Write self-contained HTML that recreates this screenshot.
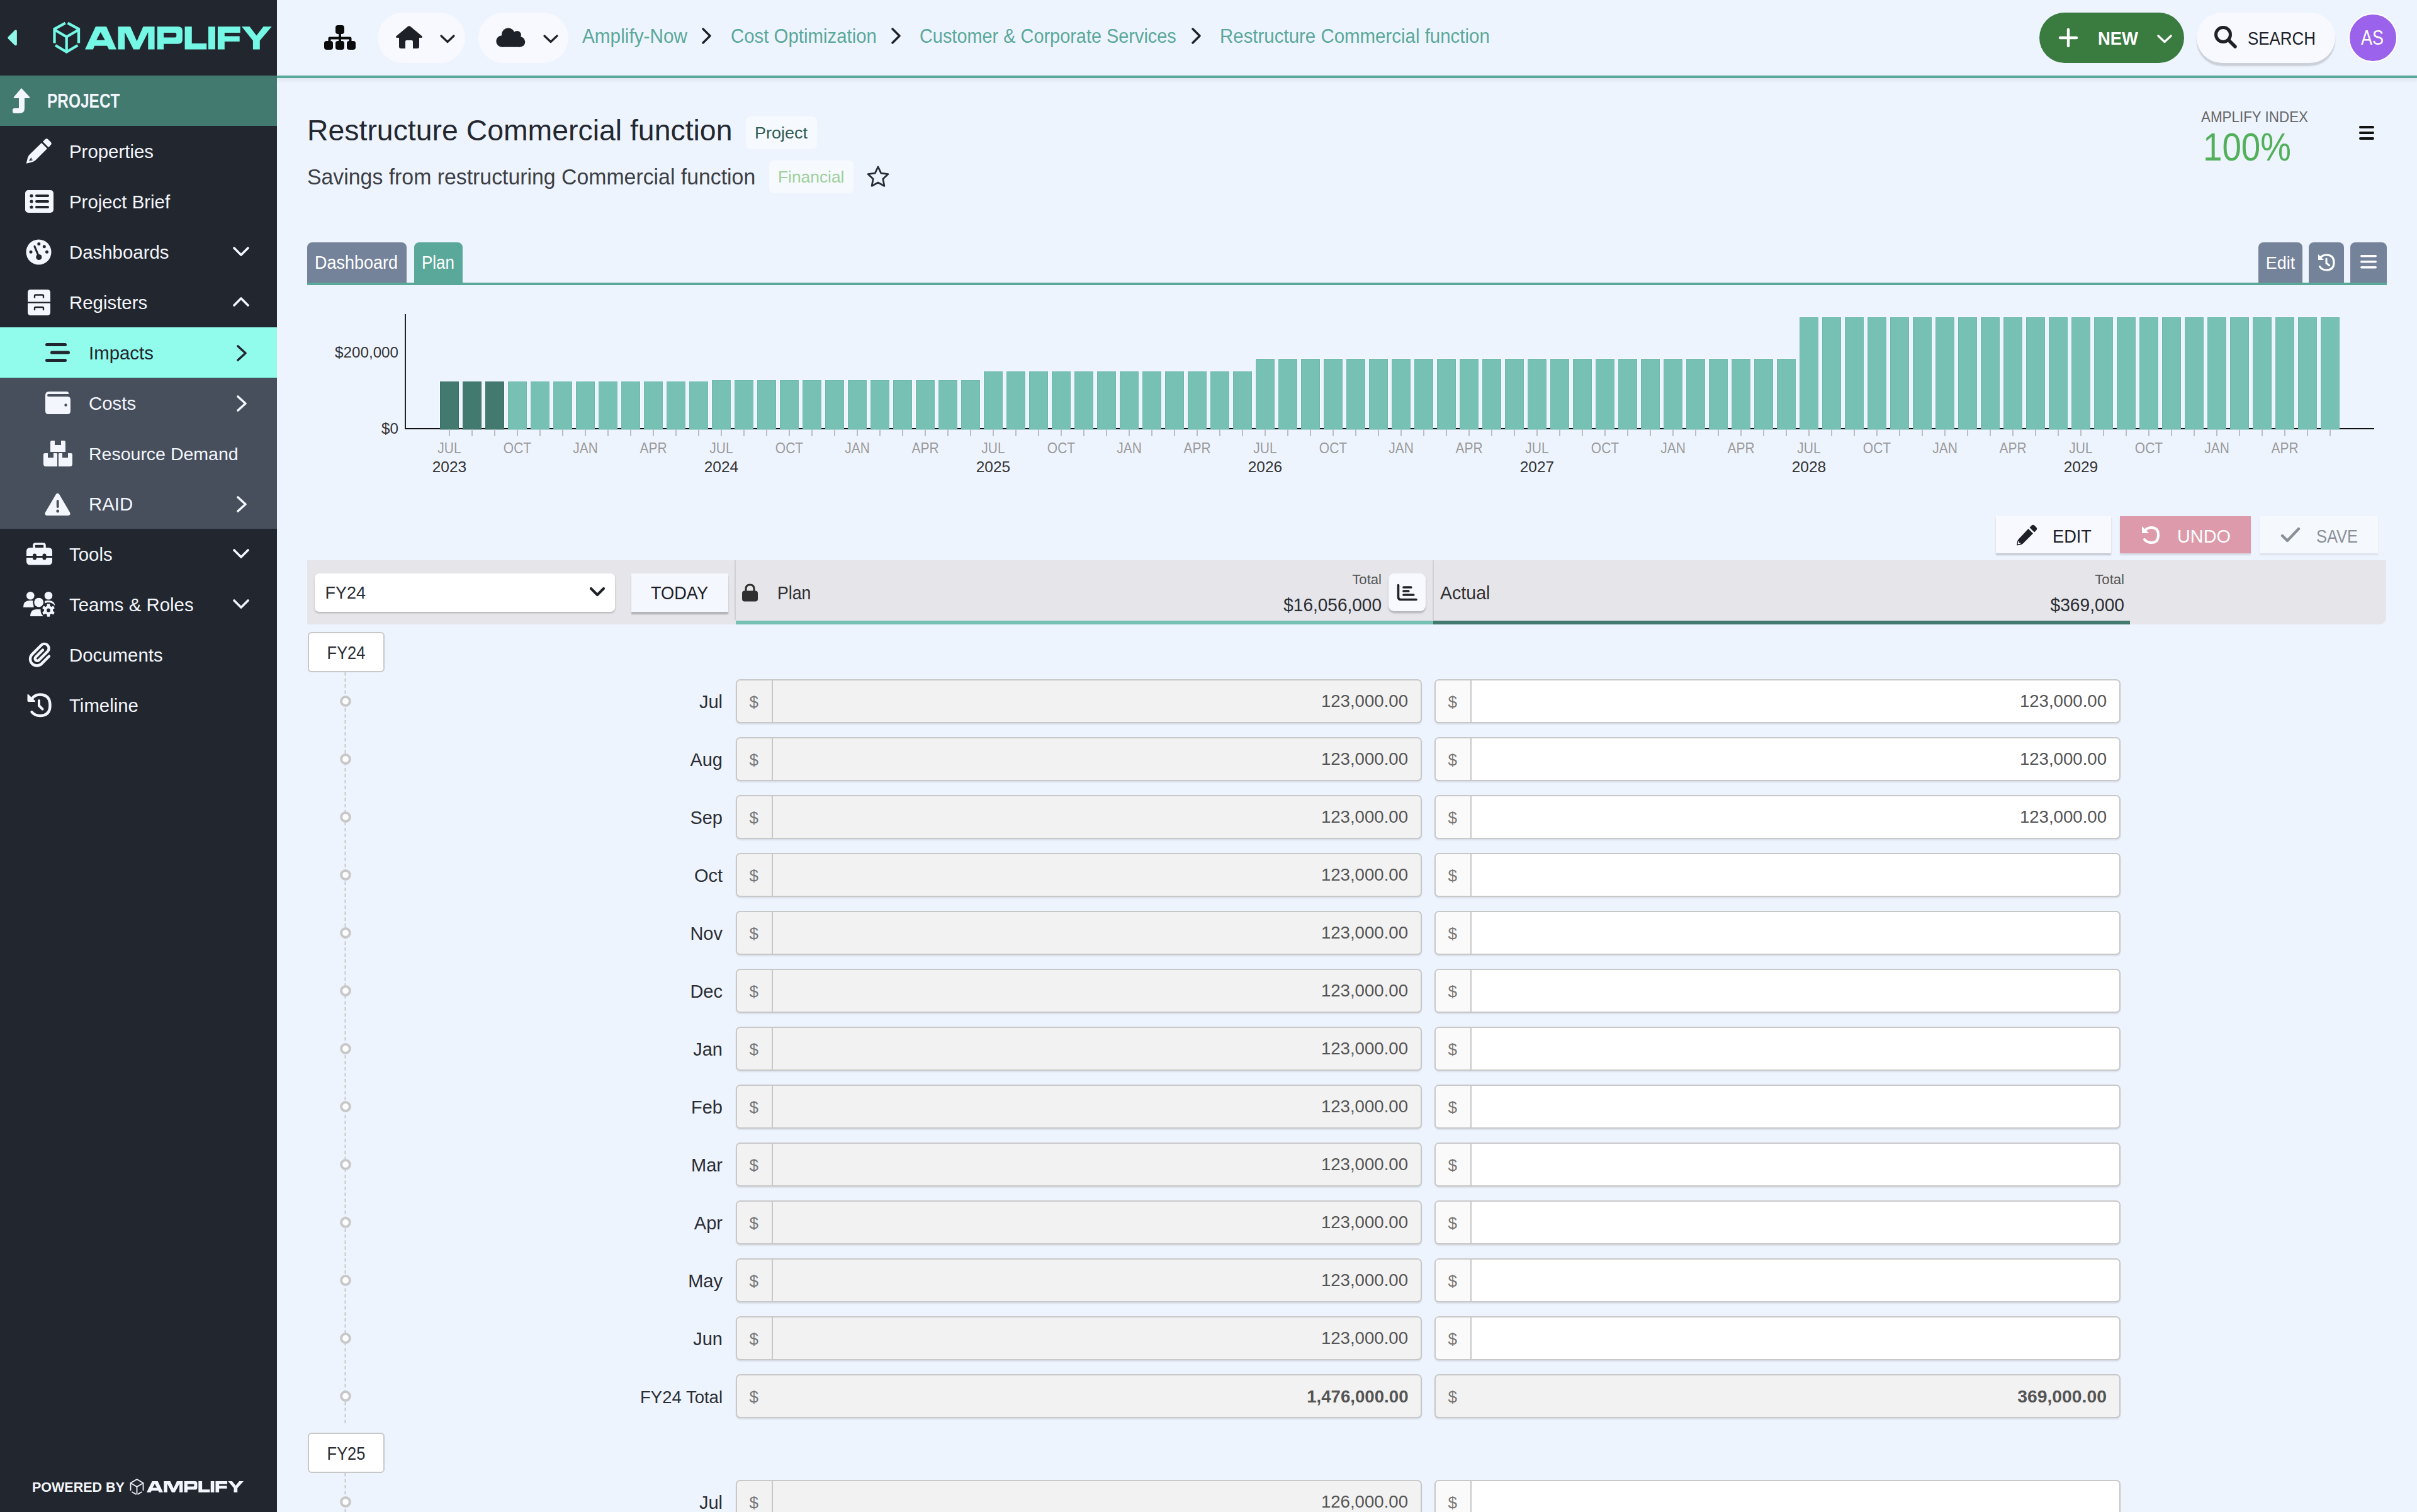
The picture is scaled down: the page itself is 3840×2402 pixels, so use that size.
<!DOCTYPE html>
<html><head><meta charset="utf-8"><title>Amplify</title>
<style>
html,body{margin:0;padding:0;}
body{width:3840px;height:2402px;overflow:hidden;position:relative;background:#eef4fe;font-family:"Liberation Sans",sans-serif;}
</style></head><body>
<div style="position:absolute;left:0px;top:0px;width:440px;height:2402px;background:#22262e;"></div>
<svg style="position:absolute;left:0px;top:0px;" width="140" height="90" viewBox="0 0 140 90"><path d="M23 48.5 Q26.9 46 26.9 50 L26.9 70 Q26.9 74 23 71.5 L13 61.5 Q11.5 60 13 58.5 Z" fill="#8ff8e8"/></svg>
<svg style="position:absolute;left:0px;top:0px;" width="140" height="90" viewBox="0 0 140 90"><g fill="none" stroke="#74f7e4" stroke-width="4.3" stroke-linecap="butt" stroke-linejoin="miter">
<path d="M86.5 68.5 L86.5 46 L103.8 36.6"/>
<path d="M107.6 36.6 L125 46 L125 68.5"/>
<path d="M87 47.5 L105.7 58.5 L124.5 47.5"/>
<path d="M105.7 58.5 L105.7 82"/>
<path d="M88 72 L105.7 82.5 L123.5 72"/>
</g></svg>
<svg style="position:absolute;left:134px;top:41px;" width="304" height="38" viewBox="0 0 304 38"><g fill="#74f7e4" fill-rule="evenodd">
<path d="M1 37.4 L17.9 1.3 L35.1 1.3 L51 37.4 L39 37.4 L36.1 31.75 L16.2 31.75 L13.9 37.4 Z M25.8 9.9 L19.2 22.8 L32.75 22.8 Z"/>
<path d="M53.6 37.4 L53.6 1.3 L73.2 1.3 L83.4 24.5 L93.4 1.3 L111.6 1.3 L111.6 37.4 L101.3 37.4 L101.3 9.9 L87.4 37.4 L78.1 37.4 L64.2 9.9 L64.2 37.4 Z"/>
<path d="M115.9 1.3 L149 1.3 Q155.9 1.3 155.9 8 L155.9 22 Q155.9 28.8 149 28.8 L126.1 28.8 L126.1 37.4 L115.9 37.4 Z M126.1 10.9 L144 10.9 Q146.3 10.9 146.3 13 L146.3 16.5 Q146.3 18.5 144 18.5 L126.1 18.5 Z"/>
<path d="M159.6 1.3 L170.8 1.3 L170.8 28.1 L194.3 28.1 L194.3 37.4 L159.6 37.4 Z"/>
<path d="M197 1.3 L207.9 1.3 L207.9 37.4 L197 37.4 Z"/>
<path d="M211.9 1.3 L247.7 1.3 L247.7 10.9 L222.8 10.9 L222.8 16.5 L246.7 16.5 L246.7 25.1 L222.8 25.1 L222.8 37.4 L211.9 37.4 Z"/>
<path d="M250 1.3 L262.6 1.3 L273.5 15.5 L284.4 1.3 L297.7 1.3 L278.8 23.5 L278.8 37.4 L267.9 37.4 L267.9 23.5 Z"/>
</g></svg>
<div style="position:absolute;left:0px;top:120px;width:440px;height:80px;background:#437a70;"></div>
<svg style="position:absolute;left:20px;top:139px;" width="29" height="42" viewBox="0 0 29 42"><path d="M14 1 L27 15 Q28 17 26 17 L19 17 L19 33 Q19 41 11 41 L3 41 Q0 41 0 38 L0 36 Q0 33 3 33 L9 33 Q10 33 10 32 L10 17 L3 17 Q1 17 2 15 Z" fill="#f3f6fc"/></svg>
<div style="position:absolute;top:145.6px;font-size:30.73px;line-height:30.73px;color:#f3f6fc;font-weight:700;white-space:nowrap;left:75.0px;transform:scaleX(0.7964);transform-origin:left center;">PROJECT</div>
<div style="position:absolute;top:225.9px;font-size:29.4px;line-height:29.4px;color:#f3f6fc;font-weight:400;white-space:nowrap;left:110.0px;">Properties</div>
<svg style="position:absolute;left:41px;top:219px;" width="42" height="42" viewBox="0 0 42 42"><path d="M30.5 2.5 Q33 0 35.5 2.5 L39.5 6.5 Q42 9 39.5 11.5 L36 15 L27 6 Z M25 8 L34 17 L16 35 Q13.5 37.5 10 38.5 L2 40.5 Q0.5 41 1 39.5 L3 31.5 Q4 28 6.5 26 Z" fill="#f3f6fc"/><path d="M9 32 L6.5 35.5 L10.5 35" fill="none" stroke="#22262e" stroke-width="1.6"/></svg>
<div style="position:absolute;top:305.9px;font-size:29.4px;line-height:29.4px;color:#f3f6fc;font-weight:400;white-space:nowrap;left:110.0px;">Project Brief</div>
<svg style="position:absolute;left:40px;top:302px;" width="45" height="36" viewBox="0 0 45 36"><rect x="0" y="0" width="45" height="36" rx="5" fill="#f3f6fc"/><g fill="#22262e"><circle cx="10" cy="9" r="2.6"/><circle cx="10" cy="18" r="2.6"/><circle cx="10" cy="27" r="2.6"/><rect x="16" y="7" width="22" height="4" rx="2"/><rect x="16" y="16" width="22" height="4" rx="2"/><rect x="16" y="25" width="22" height="4" rx="2"/></g></svg>
<div style="position:absolute;top:385.9px;font-size:29.4px;line-height:29.4px;color:#f3f6fc;font-weight:400;white-space:nowrap;left:110.0px;">Dashboards</div>
<svg style="position:absolute;left:41px;top:380px;" width="41" height="41" viewBox="0 0 41 41"><circle cx="20.5" cy="20.5" r="20" fill="#f3f6fc"/><g fill="#22262e"><circle cx="20.8" cy="7.5" r="2.5"/><circle cx="29.3" cy="11.7" r="2.5"/><circle cx="8" cy="20.2" r="2.5"/><circle cx="33.5" cy="20.2" r="2.5"/><circle cx="20.8" cy="28.5" r="4.6"/></g><path d="M14 11.5 L20.8 28" stroke="#22262e" stroke-width="3.2" stroke-linecap="round"/></svg>
<svg style="position:absolute;left:370px;top:392px;" width="26" height="16" viewBox="0 0 26 16"><path d="M2 2 L13 13 L24 2" fill="none" stroke="#f3f6fc" stroke-width="3.6" stroke-linecap="round" stroke-linejoin="round"/></svg>
<div style="position:absolute;top:465.9px;font-size:29.4px;line-height:29.4px;color:#f3f6fc;font-weight:400;white-space:nowrap;left:110.0px;">Registers</div>
<svg style="position:absolute;left:44px;top:460px;" width="36" height="41" viewBox="0 0 36 41"><path d="M5 0 L31 0 Q36 0 36 5 L36 19.5 L0 19.5 L0 5 Q0 0 5 0 Z M0 21.7 L36 21.7 L36 36 Q36 41 31 41 L5 41 Q0 41 0 36 Z" fill="#f3f6fc"/><g fill="none" stroke="#22262e" stroke-width="2.4" stroke-linecap="round"><path d="M11 12.5 L11 10 Q11 8.5 12.5 8.5 L23.5 8.5 Q25 8.5 25 10 L25 12.5"/><path d="M11 32 L11 29.5 Q11 28 12.5 28 L23.5 28 Q25 28 25 29.5 L25 32"/></g></svg>
<svg style="position:absolute;left:370px;top:471px;" width="26" height="16" viewBox="0 0 26 16"><path d="M2 14 L13 3 L24 14" fill="none" stroke="#f3f6fc" stroke-width="3.6" stroke-linecap="round" stroke-linejoin="round"/></svg>
<div style="position:absolute;left:0px;top:520px;width:440px;height:80px;background:#92fcec;"></div>
<div style="position:absolute;left:0px;top:600px;width:440px;height:240px;background:#474f5c;"></div>
<div style="position:absolute;top:545.9px;font-size:29.4px;line-height:29.4px;color:#22262e;font-weight:400;white-space:nowrap;left:141.0px;">Impacts</div>
<svg style="position:absolute;left:72px;top:544px;" width="40" height="32" viewBox="0 0 40 32"><g fill="#22262e"><rect x="0" y="1" width="34" height="5" rx="2.5"/><rect x="8" y="13.5" width="31" height="5" rx="2.5"/><rect x="0" y="26" width="34" height="5" rx="2.5"/></g></svg>
<svg style="position:absolute;left:375px;top:548px;" width="18" height="26" viewBox="0 0 18 26"><path d="M3 2 L15 13 L3 24" fill="none" stroke="#22262e" stroke-width="3.6" stroke-linecap="round" stroke-linejoin="round"/></svg>
<div style="position:absolute;top:625.9px;font-size:29.4px;line-height:29.4px;color:#f3f6fc;font-weight:400;white-space:nowrap;left:141.0px;">Costs</div>
<svg style="position:absolute;left:72px;top:622px;" width="40" height="36" viewBox="0 0 40 36"><path d="M6 0 L34 0 Q37 0 37 3 L37 4 L5 4 Q3 4 3 6 Q3 8 5 8 L35 8 Q40 8 40 13 L40 31 Q40 36 35 36 L5 36 Q0 36 0 31 L0 6 Q0 0 6 0 Z" fill="#f3f6fc"/><circle cx="32.5" cy="21.5" r="2.2" fill="#474f5c"/></svg>
<svg style="position:absolute;left:375px;top:628px;" width="18" height="26" viewBox="0 0 18 26"><path d="M3 2 L15 13 L3 24" fill="none" stroke="#f3f6fc" stroke-width="3.6" stroke-linecap="round" stroke-linejoin="round"/></svg>
<div style="position:absolute;top:706.7px;font-size:28.5px;line-height:28.5px;color:#f3f6fc;font-weight:400;white-space:nowrap;left:141.0px;">Resource Demand</div>
<svg style="position:absolute;left:69px;top:700px;" width="46" height="41" viewBox="0 0 46 41"><g fill="#f3f6fc"><path d="M13 0 L18 0 L18 7 L28 7 L28 0 L33 0 Q35 0 35 3 L35 18 L11 18 L11 3 Q11 0 13 0 Z"/><path d="M2 20 L7 20 L7 27 L16 27 L16 20 L21 20 Q22 20 22 22 L22 41 L4 41 Q0 41 0 37 L0 22 Q0 20 2 20 Z"/><path d="M25 20 L30 20 L30 27 L39 27 L39 20 L44 20 Q46 20 46 22 L46 37 Q46 41 42 41 L24 41 L24 22 Q24 20 25 20 Z"/></g></svg>
<div style="position:absolute;top:785.9px;font-size:29.4px;line-height:29.4px;color:#f3f6fc;font-weight:400;white-space:nowrap;left:141.0px;">RAID</div>
<svg style="position:absolute;left:71px;top:783px;" width="41" height="36" viewBox="0 0 41 36"><path d="M18 2 Q20.5 -1 23 2 L40 31 Q42 36 36 36 L5 36 Q-1 36 1 31 Z" fill="#f3f6fc"/><rect x="18.8" y="11" width="3.8" height="13" rx="1.9" fill="#474f5c"/><circle cx="20.7" cy="29" r="2.4" fill="#474f5c"/></svg>
<svg style="position:absolute;left:375px;top:788px;" width="18" height="26" viewBox="0 0 18 26"><path d="M3 2 L15 13 L3 24" fill="none" stroke="#f3f6fc" stroke-width="3.6" stroke-linecap="round" stroke-linejoin="round"/></svg>
<div style="position:absolute;top:865.9px;font-size:29.4px;line-height:29.4px;color:#f3f6fc;font-weight:400;white-space:nowrap;left:110.0px;">Tools</div>
<svg style="position:absolute;left:41.5px;top:862px;" width="41" height="36" viewBox="0 0 41 36"><path d="M12 9 L12 4.5 Q12 2 14.5 2 L26.5 2 Q29 2 29 4.5 L29 9" fill="none" stroke="#f3f6fc" stroke-width="3.6"/><rect x="0" y="8" width="41" height="27.6" rx="5.5" fill="#f3f6fc"/><rect x="0" y="21" width="41" height="3" fill="#22262e"/><rect x="10" y="17.5" width="6" height="10" rx="3" fill="#22262e"/><rect x="25.5" y="17.5" width="6" height="10" rx="3" fill="#22262e"/></svg>
<svg style="position:absolute;left:370px;top:872px;" width="26" height="16" viewBox="0 0 26 16"><path d="M2 2 L13 13 L24 2" fill="none" stroke="#f3f6fc" stroke-width="3.6" stroke-linecap="round" stroke-linejoin="round"/></svg>
<div style="position:absolute;top:945.9px;font-size:29.4px;line-height:29.4px;color:#f3f6fc;font-weight:400;white-space:nowrap;left:110.0px;">Teams &amp; Roles</div>
<svg style="position:absolute;left:37px;top:939px;" width="51" height="42" viewBox="0 0 51 42"><g fill="#f3f6fc"><circle cx="11.3" cy="7.2" r="6.3"/><circle cx="40" cy="7.2" r="6.3"/><path d="M0 25.7 Q0 15 10 15 L13 15 Q16.5 15 18.5 17 Q16 20.5 16.5 25.7 Z"/><path d="M33 17 Q35 15 38 15 L41 15 Q50.5 15 50.5 25.7 L33 25.7 Z"/></g><circle cx="24.7" cy="18.1" r="9.5" fill="#22262e"/><circle cx="24.7" cy="18.1" r="7.4" fill="#f3f6fc"/><path d="M9.9 41 Q9.9 28 21 28 L28 28 Q37.6 28 37.6 41 Z" fill="#f3f6fc" stroke="#22262e" stroke-width="2.2"/><g transform="translate(40,30.5)"><circle r="12.5" fill="#22262e"/><circle r="7.2" fill="#f3f6fc"/><g fill="#f3f6fc"><rect x="-2.4" y="-10.2" width="4.8" height="20.4" rx="1.2"/><rect x="-2.4" y="-10.2" width="4.8" height="20.4" rx="1.2" transform="rotate(60)"/><rect x="-2.4" y="-10.2" width="4.8" height="20.4" rx="1.2" transform="rotate(-60)"/></g><circle r="2.9" fill="#22262e"/></g></svg>
<svg style="position:absolute;left:370px;top:952px;" width="26" height="16" viewBox="0 0 26 16"><path d="M2 2 L13 13 L24 2" fill="none" stroke="#f3f6fc" stroke-width="3.6" stroke-linecap="round" stroke-linejoin="round"/></svg>
<div style="position:absolute;top:1025.9px;font-size:29.4px;line-height:29.4px;color:#f3f6fc;font-weight:400;white-space:nowrap;left:110.0px;">Documents</div>
<svg style="position:absolute;left:44.5px;top:1020px;" width="36" height="40" viewBox="0 0 448 512"><path d="M364.2 83.8c-24.4-24.4-64-24.4-88.4 0l-184 184c-42.1 42.1-42.1 110.3 0 152.4s110.3 42.1 152.4 0l152-152c10.9-10.9 28.7-10.9 39.6 0s10.9 28.7 0 39.6l-152 152c-64 64-167.6 64-231.6 0s-64-167.6 0-231.6l184-184c46.3-46.3 121.3-46.3 167.6 0s46.3 121.3 0 167.6l-176 176c-28.6 28.6-75 28.6-103.6 0s-28.6-75 0-103.6l144-144c10.9-10.9 28.7-10.9 39.6 0s10.9 28.7 0 39.6l-144 144c-6.7 6.7-6.7 17.7 0 24.4s17.7 6.7 24.4 0l176-176c24.4-24.4 24.4-64 0-88.4z" fill="#f3f6fc"/></svg>
<div style="position:absolute;top:1105.9px;font-size:29.4px;line-height:29.4px;color:#f3f6fc;font-weight:400;white-space:nowrap;left:110.0px;">Timeline</div>
<svg style="position:absolute;left:41px;top:1100px;" width="42" height="42" viewBox="0 0 42 42"><path d="M10 9.5 Q14.5 3.5 22.5 3.5 Q38.5 3.5 38.5 20.5 Q38.5 37 22.5 37 Q14 37 9.5 31" fill="none" stroke="#f3f6fc" stroke-width="4.4" stroke-linecap="round"/><path d="M2.5 4 Q2.5 2 4.5 3.5 L14.5 13 Q16 15 13.5 15 L4.5 15 Q2.5 15 2.5 13 Z" fill="#f3f6fc"/><path d="M21 13 L21 21 L26.5 26.5" fill="none" stroke="#f3f6fc" stroke-width="4" stroke-linecap="round" stroke-linejoin="round"/></svg>
<div style="position:absolute;top:2352.0px;font-size:22.21px;line-height:22.21px;color:#f3f6fc;font-weight:700;white-space:nowrap;left:51.0px;transform:scaleX(0.9685);transform-origin:left center;">POWERED BY</div>
<svg style="position:absolute;left:206px;top:2349px;" width="23" height="26" viewBox="0 0 22 26"><g fill="none" stroke="#f3f6fc" stroke-width="1.8"><path d="M11 1 L21 7 L21 19 M19 21 L12 25 M10 25 L3 21 M1 19 L1 7 L11 1"/><path d="M1 7 L11 13 L21 7 M11 13 L11 25"/></g></svg>
<svg style="position:absolute;left:233.4px;top:2353px" width="154" height="17.8" viewBox="1 1.3 296.7 36.1" preserveAspectRatio="none"><g fill="#f3f6fc" fill-rule="evenodd">
<path d="M1 37.4 L17.9 1.3 L35.1 1.3 L51 37.4 L39 37.4 L36.1 31.75 L16.2 31.75 L13.9 37.4 Z M25.8 9.9 L19.2 22.8 L32.75 22.8 Z"/>
<path d="M53.6 37.4 L53.6 1.3 L73.2 1.3 L83.4 24.5 L93.4 1.3 L111.6 1.3 L111.6 37.4 L101.3 37.4 L101.3 9.9 L87.4 37.4 L78.1 37.4 L64.2 9.9 L64.2 37.4 Z"/>
<path d="M115.9 1.3 L149 1.3 Q155.9 1.3 155.9 8 L155.9 22 Q155.9 28.8 149 28.8 L126.1 28.8 L126.1 37.4 L115.9 37.4 Z M126.1 10.9 L144 10.9 Q146.3 10.9 146.3 13 L146.3 16.5 Q146.3 18.5 144 18.5 L126.1 18.5 Z"/>
<path d="M159.6 1.3 L170.8 1.3 L170.8 28.1 L194.3 28.1 L194.3 37.4 L159.6 37.4 Z"/>
<path d="M197 1.3 L207.9 1.3 L207.9 37.4 L197 37.4 Z"/>
<path d="M211.9 1.3 L247.7 1.3 L247.7 10.9 L222.8 10.9 L222.8 16.5 L246.7 16.5 L246.7 25.1 L222.8 25.1 L222.8 37.4 L211.9 37.4 Z"/>
<path d="M250 1.3 L262.6 1.3 L273.5 15.5 L284.4 1.3 L297.7 1.3 L278.8 23.5 L278.8 37.4 L267.9 37.4 L267.9 23.5 Z"/>
</g></svg>
<svg style="position:absolute;left:515px;top:40px;" width="50" height="40" viewBox="0 0 50 40"><g fill="#0b0b0c"><rect x="18" y="0" width="14" height="14" rx="4"/><rect x="23" y="10" width="4" height="10"/><path d="M6.5 25 L6.5 21 Q6.5 18.5 9 18.5 L41 18.5 Q43.5 18.5 43.5 21 L43.5 25 L39.5 25 L39.5 22.5 L10.5 22.5 L10.5 25 Z"/><rect x="23" y="19" width="4" height="7"/><rect x="0" y="25" width="14" height="14" rx="4"/><rect x="18" y="25" width="14" height="14" rx="4"/><rect x="36" y="25" width="14" height="14" rx="4"/></g></svg>
<div style="position:absolute;left:600px;top:20px;width:139px;height:80px;background:#f7f9ff;border-radius:40px;"></div>
<div style="position:absolute;left:760px;top:20px;width:143px;height:80px;background:#f7f9ff;border-radius:40px;"></div>
<svg style="position:absolute;left:629px;top:41px;" width="42" height="36" viewBox="0 0 42 36"><path d="M19 1 Q21 -0.5 23 1 L41 16 Q43 18 41 19 L37 19 L37 33 Q37 36 34 36 L27 36 L27 25 Q27 23 25 23 L17 23 Q15 23 15 25 L15 36 L8 36 Q5 36 5 33 L5 19 L1 19 Q-1 18 1 16 Z" fill="#1e2127"/></svg>
<svg style="position:absolute;left:699px;top:55px;" width="24" height="14" viewBox="0 0 24 14"><path d="M2 2 L12 11.5 L22 2" fill="none" stroke="#1e2127" stroke-width="3.2" stroke-linecap="round" stroke-linejoin="round"/></svg>
<svg style="position:absolute;left:788px;top:44px;" width="47" height="31" viewBox="0 0 47 31"><g fill="#1e2127"><circle cx="19.5" cy="11" r="10.5"/><circle cx="33.5" cy="11.5" r="6.5"/><circle cx="9.5" cy="21.5" r="9.2"/><circle cx="38" cy="22.5" r="8.3"/><rect x="9.5" y="14" width="28.5" height="16.7"/></g></svg>
<svg style="position:absolute;left:863px;top:55px;" width="24" height="14" viewBox="0 0 24 14"><path d="M2 2 L12 11.5 L22 2" fill="none" stroke="#1e2127" stroke-width="3.2" stroke-linecap="round" stroke-linejoin="round"/></svg>
<div style="position:absolute;top:41.8px;font-size:31.28px;line-height:31.28px;color:#5aa89a;font-weight:400;white-space:nowrap;left:925.0px;transform:scaleX(0.9514);transform-origin:left center;">Amplify-Now</div>
<svg style="position:absolute;left:1114px;top:44px;" width="18" height="26" viewBox="0 0 18 26"><path d="M3 2 L14 13 L3 24" fill="none" stroke="#1e2127" stroke-width="3.4" stroke-linecap="round" stroke-linejoin="round"/></svg>
<div style="position:absolute;top:41.8px;font-size:31.28px;line-height:31.28px;color:#5aa89a;font-weight:400;white-space:nowrap;left:1161.0px;transform:scaleX(0.9398);transform-origin:left center;">Cost Optimization</div>
<svg style="position:absolute;left:1415px;top:44px;" width="18" height="26" viewBox="0 0 18 26"><path d="M3 2 L14 13 L3 24" fill="none" stroke="#1e2127" stroke-width="3.4" stroke-linecap="round" stroke-linejoin="round"/></svg>
<div style="position:absolute;top:41.8px;font-size:31.28px;line-height:31.28px;color:#5aa89a;font-weight:400;white-space:nowrap;left:1461.0px;transform:scaleX(0.9240);transform-origin:left center;">Customer &amp; Corporate Services</div>
<svg style="position:absolute;left:1892px;top:44px;" width="18" height="26" viewBox="0 0 18 26"><path d="M3 2 L14 13 L3 24" fill="none" stroke="#1e2127" stroke-width="3.4" stroke-linecap="round" stroke-linejoin="round"/></svg>
<div style="position:absolute;top:41.8px;font-size:31.28px;line-height:31.28px;color:#5aa89a;font-weight:400;white-space:nowrap;left:1938.0px;transform:scaleX(0.9419);transform-origin:left center;">Restructure Commercial function</div>
<div style="position:absolute;left:440px;top:120px;width:3400px;height:4px;background:#5aa89a;box-shadow:0 3px 6px rgba(0,0,0,0.10);"></div>
<div style="position:absolute;left:3240px;top:20px;width:230px;height:80px;background:#3a7b40;border-radius:40px;"></div>
<svg style="position:absolute;left:3270px;top:44px;" width="32" height="32" viewBox="0 0 32 32"><path d="M16 3 L16 29 M3 16 L29 16" stroke="#fff" stroke-width="4.4" stroke-linecap="round"/></svg>
<div style="position:absolute;top:47.0px;font-size:28.77px;line-height:28.77px;color:#ffffff;font-weight:700;white-space:nowrap;left:3333.0px;transform:scaleX(0.9535);transform-origin:left center;">NEW</div>
<svg style="position:absolute;left:3427px;top:55px;" width="24" height="14" viewBox="0 0 24 14"><path d="M2 2 L12 11.5 L22 2" fill="none" stroke="#ffffff" stroke-width="3.4" stroke-linecap="round" stroke-linejoin="round"/></svg>
<div style="position:absolute;left:3490px;top:20px;width:220px;height:80px;background:#f7f9fe;border-radius:40px;box-shadow:0 5px 2px rgba(0,0,0,0.15);"></div>
<svg style="position:absolute;left:3517px;top:40px;" width="38" height="38" viewBox="0 0 38 38"><circle cx="15" cy="15" r="11.5" fill="none" stroke="#1e2127" stroke-width="5"/><path d="M24 24 L34 34" stroke="#1e2127" stroke-width="5.5" stroke-linecap="round"/></svg>
<div style="position:absolute;top:47.0px;font-size:28.77px;line-height:28.77px;color:#1e2127;font-weight:400;white-space:nowrap;left:3571.0px;transform:scaleX(0.9008);transform-origin:left center;">SEARCH</div>
<div style="position:absolute;left:3731px;top:21px;width:78px;height:78px;background:#9b63eb;border-radius:50%;border:2px solid #fff;box-sizing:border-box;"></div>
<div style="position:absolute;top:43.6px;font-size:32.82px;line-height:32.82px;color:#ffffff;font-weight:400;white-space:nowrap;left:3269.0px;width:1000px;text-align:center;transform:scaleX(0.8222);transform-origin:center center;">AS</div>
<div style="position:absolute;top:183.7px;font-size:46.65px;line-height:46.65px;color:#23272e;font-weight:400;white-space:nowrap;left:488.0px;transform:scaleX(0.9946);transform-origin:left center;">Restructure Commercial function</div>
<div style="position:absolute;left:1185px;top:185px;width:113px;height:52px;background:#f6f9fe;border-radius:8px;"></div>
<div style="position:absolute;top:199.2px;font-size:25.0px;line-height:25.0px;color:#2f5d53;font-weight:400;white-space:nowrap;left:1199.0px;transform:scaleX(1.0796);transform-origin:left center;">Project</div>
<div style="position:absolute;top:264.3px;font-size:34.92px;line-height:34.92px;color:#3c3f44;font-weight:400;white-space:nowrap;left:488.0px;transform:scaleX(0.9687);transform-origin:left center;">Savings from restructuring Commercial function</div>
<div style="position:absolute;left:1222px;top:255px;width:134px;height:52px;background:#f6f9fe;border-radius:8px;"></div>
<div style="position:absolute;top:269.2px;font-size:25.14px;line-height:25.14px;color:#9dd09a;font-weight:400;white-space:nowrap;left:1236.0px;transform:scaleX(1.0486);transform-origin:left center;">Financial</div>
<svg style="position:absolute;left:1376px;top:262px;" width="38" height="38" viewBox="0 0 38 38"><path d="M19 3 L23.8 13.2 L35 14.6 L26.8 22.3 L28.9 33.4 L19 28 L9.1 33.4 L11.2 22.3 L3 14.6 L14.2 13.2 Z" fill="none" stroke="#2a2d33" stroke-width="2.8" stroke-linejoin="round"/></svg>
<div style="position:absolute;top:174.3px;font-size:24.44px;line-height:24.44px;color:#666666;font-weight:400;white-space:nowrap;left:3497.0px;transform:scaleX(0.9159);transform-origin:left center;">AMPLIFY INDEX</div>
<div style="position:absolute;top:202.9px;font-size:62.15px;line-height:62.15px;color:#52b05a;font-weight:400;white-space:nowrap;left:3500.0px;transform:scaleX(0.8807);transform-origin:left center;">100%</div>
<svg style="position:absolute;left:3748px;top:200px;" width="24" height="22" viewBox="0 0 24 22"><g fill="#111"><rect x="0" y="0" width="24" height="4" rx="2"/><rect x="0" y="9" width="24" height="4" rx="2"/><rect x="0" y="18" width="24" height="4" rx="2"/></g></svg>
<div style="position:absolute;left:488px;top:385px;width:158px;height:67px;background:#74839a;border-radius:8px 8px 0 0;"></div>
<div style="position:absolute;top:403.3px;font-size:28.77px;line-height:28.77px;color:#ffffff;font-weight:400;white-space:nowrap;left:500.0px;transform:scaleX(0.9378);transform-origin:left center;">Dashboard</div>
<div style="position:absolute;left:658px;top:385px;width:77px;height:67px;background:#5aa89a;border-radius:8px 8px 0 0;"></div>
<div style="position:absolute;top:403.3px;font-size:28.77px;line-height:28.77px;color:#ffffff;font-weight:400;white-space:nowrap;left:670.0px;transform:scaleX(0.9030);transform-origin:left center;">Plan</div>
<div style="position:absolute;left:488px;top:449px;width:3304px;height:4px;background:#5aa89a;"></div>
<div style="position:absolute;left:3588px;top:385px;width:70px;height:64px;background:#74839a;border-radius:8px 8px 0 0;"></div>
<div style="position:absolute;top:404.8px;font-size:27px;line-height:27px;color:#ffffff;font-weight:400;white-space:nowrap;left:3123.0px;width:1000px;text-align:center;">Edit</div>
<div style="position:absolute;left:3668px;top:385px;width:56px;height:64px;background:#74839a;border-radius:8px 8px 0 0;"></div>
<svg style="position:absolute;left:3681px;top:402px;" width="30" height="30" viewBox="0 0 30 30"><path d="M5.5 7 Q9.5 3 15 3 Q27 3 27 15 Q27 27 15 27 Q8 27 4.5 21.5" fill="none" stroke="#fff" stroke-width="3.2" stroke-linecap="round"/><path d="M2 2 L2 11 L11 11 Z" fill="#fff"/><path d="M15 9 L15 16 L19.5 19.5" fill="none" stroke="#fff" stroke-width="3" stroke-linecap="round"/></svg>
<div style="position:absolute;left:3734px;top:385px;width:58px;height:64px;background:#74839a;border-radius:8px 8px 0 0;"></div>
<svg style="position:absolute;left:3750px;top:405px;" width="26" height="22" viewBox="0 0 26 22"><g fill="#fff"><rect x="0" y="0" width="26" height="3.6" rx="1.8"/><rect x="0" y="9" width="26" height="3.6" rx="1.8"/><rect x="0" y="18" width="26" height="3.6" rx="1.8"/></g></svg>
<svg style="position:absolute;left:0;top:0" width="3840" height="800" viewBox="0 0 3840 800"><rect x="643" y="499" width="2" height="183" fill="#222"/><rect x="643" y="680" width="3129" height="2" fill="#111"/><rect x="698" y="605" width="32" height="75" fill="#f7f9ff"/><rect x="699.5" y="606.5" width="29" height="75.5" fill="#437a70" stroke="#3b6f66" stroke-width="1"/><rect x="713" y="682" width="2" height="11" fill="#bdbdbd"/><rect x="734" y="605" width="32" height="75" fill="#f7f9ff"/><rect x="735.5" y="606.5" width="29" height="75.5" fill="#437a70" stroke="#3b6f66" stroke-width="1"/><rect x="749" y="682" width="2" height="11" fill="#bdbdbd"/><rect x="770" y="605" width="32" height="75" fill="#f7f9ff"/><rect x="771.5" y="606.5" width="29" height="75.5" fill="#437a70" stroke="#3b6f66" stroke-width="1"/><rect x="785" y="682" width="2" height="11" fill="#bdbdbd"/><rect x="806" y="605" width="32" height="75" fill="#f7f9ff"/><rect x="807.5" y="606.5" width="29" height="75.5" fill="#77c0b4" stroke="#6bb8ab" stroke-width="1"/><rect x="821" y="682" width="2" height="11" fill="#bdbdbd"/><rect x="842" y="605" width="32" height="75" fill="#f7f9ff"/><rect x="843.5" y="606.5" width="29" height="75.5" fill="#77c0b4" stroke="#6bb8ab" stroke-width="1"/><rect x="857" y="682" width="2" height="11" fill="#bdbdbd"/><rect x="878" y="605" width="32" height="75" fill="#f7f9ff"/><rect x="879.5" y="606.5" width="29" height="75.5" fill="#77c0b4" stroke="#6bb8ab" stroke-width="1"/><rect x="893" y="682" width="2" height="11" fill="#bdbdbd"/><rect x="914" y="605" width="32" height="75" fill="#f7f9ff"/><rect x="915.5" y="606.5" width="29" height="75.5" fill="#77c0b4" stroke="#6bb8ab" stroke-width="1"/><rect x="929" y="682" width="2" height="11" fill="#bdbdbd"/><rect x="950" y="605" width="32" height="75" fill="#f7f9ff"/><rect x="951.5" y="606.5" width="29" height="75.5" fill="#77c0b4" stroke="#6bb8ab" stroke-width="1"/><rect x="965" y="682" width="2" height="11" fill="#bdbdbd"/><rect x="986" y="605" width="32" height="75" fill="#f7f9ff"/><rect x="987.5" y="606.5" width="29" height="75.5" fill="#77c0b4" stroke="#6bb8ab" stroke-width="1"/><rect x="1001" y="682" width="2" height="11" fill="#bdbdbd"/><rect x="1022" y="605" width="32" height="75" fill="#f7f9ff"/><rect x="1023.5" y="606.5" width="29" height="75.5" fill="#77c0b4" stroke="#6bb8ab" stroke-width="1"/><rect x="1037" y="682" width="2" height="11" fill="#bdbdbd"/><rect x="1058" y="605" width="32" height="75" fill="#f7f9ff"/><rect x="1059.5" y="606.5" width="29" height="75.5" fill="#77c0b4" stroke="#6bb8ab" stroke-width="1"/><rect x="1073" y="682" width="2" height="11" fill="#bdbdbd"/><rect x="1094" y="605" width="32" height="75" fill="#f7f9ff"/><rect x="1095.5" y="606.5" width="29" height="75.5" fill="#77c0b4" stroke="#6bb8ab" stroke-width="1"/><rect x="1109" y="682" width="2" height="11" fill="#bdbdbd"/><rect x="1130" y="603" width="32" height="77" fill="#f7f9ff"/><rect x="1131.5" y="604.5" width="29" height="77.5" fill="#77c0b4" stroke="#6bb8ab" stroke-width="1"/><rect x="1145" y="682" width="2" height="11" fill="#bdbdbd"/><rect x="1166" y="603" width="32" height="77" fill="#f7f9ff"/><rect x="1167.5" y="604.5" width="29" height="77.5" fill="#77c0b4" stroke="#6bb8ab" stroke-width="1"/><rect x="1181" y="682" width="2" height="11" fill="#bdbdbd"/><rect x="1202" y="603" width="32" height="77" fill="#f7f9ff"/><rect x="1203.5" y="604.5" width="29" height="77.5" fill="#77c0b4" stroke="#6bb8ab" stroke-width="1"/><rect x="1217" y="682" width="2" height="11" fill="#bdbdbd"/><rect x="1238" y="603" width="32" height="77" fill="#f7f9ff"/><rect x="1239.5" y="604.5" width="29" height="77.5" fill="#77c0b4" stroke="#6bb8ab" stroke-width="1"/><rect x="1253" y="682" width="2" height="11" fill="#bdbdbd"/><rect x="1274" y="603" width="32" height="77" fill="#f7f9ff"/><rect x="1275.5" y="604.5" width="29" height="77.5" fill="#77c0b4" stroke="#6bb8ab" stroke-width="1"/><rect x="1289" y="682" width="2" height="11" fill="#bdbdbd"/><rect x="1310" y="603" width="32" height="77" fill="#f7f9ff"/><rect x="1311.5" y="604.5" width="29" height="77.5" fill="#77c0b4" stroke="#6bb8ab" stroke-width="1"/><rect x="1325" y="682" width="2" height="11" fill="#bdbdbd"/><rect x="1346" y="603" width="32" height="77" fill="#f7f9ff"/><rect x="1347.5" y="604.5" width="29" height="77.5" fill="#77c0b4" stroke="#6bb8ab" stroke-width="1"/><rect x="1361" y="682" width="2" height="11" fill="#bdbdbd"/><rect x="1382" y="603" width="32" height="77" fill="#f7f9ff"/><rect x="1383.5" y="604.5" width="29" height="77.5" fill="#77c0b4" stroke="#6bb8ab" stroke-width="1"/><rect x="1397" y="682" width="2" height="11" fill="#bdbdbd"/><rect x="1418" y="603" width="32" height="77" fill="#f7f9ff"/><rect x="1419.5" y="604.5" width="29" height="77.5" fill="#77c0b4" stroke="#6bb8ab" stroke-width="1"/><rect x="1433" y="682" width="2" height="11" fill="#bdbdbd"/><rect x="1454" y="603" width="32" height="77" fill="#f7f9ff"/><rect x="1455.5" y="604.5" width="29" height="77.5" fill="#77c0b4" stroke="#6bb8ab" stroke-width="1"/><rect x="1469" y="682" width="2" height="11" fill="#bdbdbd"/><rect x="1490" y="603" width="32" height="77" fill="#f7f9ff"/><rect x="1491.5" y="604.5" width="29" height="77.5" fill="#77c0b4" stroke="#6bb8ab" stroke-width="1"/><rect x="1505" y="682" width="2" height="11" fill="#bdbdbd"/><rect x="1526" y="603" width="32" height="77" fill="#f7f9ff"/><rect x="1527.5" y="604.5" width="29" height="77.5" fill="#77c0b4" stroke="#6bb8ab" stroke-width="1"/><rect x="1541" y="682" width="2" height="11" fill="#bdbdbd"/><rect x="1562" y="589" width="32" height="91" fill="#f7f9ff"/><rect x="1563.5" y="590.5" width="29" height="91.5" fill="#77c0b4" stroke="#6bb8ab" stroke-width="1"/><rect x="1577" y="682" width="2" height="11" fill="#bdbdbd"/><rect x="1598" y="589" width="32" height="91" fill="#f7f9ff"/><rect x="1599.5" y="590.5" width="29" height="91.5" fill="#77c0b4" stroke="#6bb8ab" stroke-width="1"/><rect x="1613" y="682" width="2" height="11" fill="#bdbdbd"/><rect x="1634" y="589" width="32" height="91" fill="#f7f9ff"/><rect x="1635.5" y="590.5" width="29" height="91.5" fill="#77c0b4" stroke="#6bb8ab" stroke-width="1"/><rect x="1649" y="682" width="2" height="11" fill="#bdbdbd"/><rect x="1670" y="589" width="32" height="91" fill="#f7f9ff"/><rect x="1671.5" y="590.5" width="29" height="91.5" fill="#77c0b4" stroke="#6bb8ab" stroke-width="1"/><rect x="1685" y="682" width="2" height="11" fill="#bdbdbd"/><rect x="1706" y="589" width="32" height="91" fill="#f7f9ff"/><rect x="1707.5" y="590.5" width="29" height="91.5" fill="#77c0b4" stroke="#6bb8ab" stroke-width="1"/><rect x="1721" y="682" width="2" height="11" fill="#bdbdbd"/><rect x="1742" y="589" width="32" height="91" fill="#f7f9ff"/><rect x="1743.5" y="590.5" width="29" height="91.5" fill="#77c0b4" stroke="#6bb8ab" stroke-width="1"/><rect x="1757" y="682" width="2" height="11" fill="#bdbdbd"/><rect x="1778" y="589" width="32" height="91" fill="#f7f9ff"/><rect x="1779.5" y="590.5" width="29" height="91.5" fill="#77c0b4" stroke="#6bb8ab" stroke-width="1"/><rect x="1793" y="682" width="2" height="11" fill="#bdbdbd"/><rect x="1814" y="589" width="32" height="91" fill="#f7f9ff"/><rect x="1815.5" y="590.5" width="29" height="91.5" fill="#77c0b4" stroke="#6bb8ab" stroke-width="1"/><rect x="1829" y="682" width="2" height="11" fill="#bdbdbd"/><rect x="1850" y="589" width="32" height="91" fill="#f7f9ff"/><rect x="1851.5" y="590.5" width="29" height="91.5" fill="#77c0b4" stroke="#6bb8ab" stroke-width="1"/><rect x="1865" y="682" width="2" height="11" fill="#bdbdbd"/><rect x="1886" y="589" width="32" height="91" fill="#f7f9ff"/><rect x="1887.5" y="590.5" width="29" height="91.5" fill="#77c0b4" stroke="#6bb8ab" stroke-width="1"/><rect x="1901" y="682" width="2" height="11" fill="#bdbdbd"/><rect x="1922" y="589" width="32" height="91" fill="#f7f9ff"/><rect x="1923.5" y="590.5" width="29" height="91.5" fill="#77c0b4" stroke="#6bb8ab" stroke-width="1"/><rect x="1937" y="682" width="2" height="11" fill="#bdbdbd"/><rect x="1958" y="589" width="32" height="91" fill="#f7f9ff"/><rect x="1959.5" y="590.5" width="29" height="91.5" fill="#77c0b4" stroke="#6bb8ab" stroke-width="1"/><rect x="1973" y="682" width="2" height="11" fill="#bdbdbd"/><rect x="1994" y="569" width="32" height="111" fill="#f7f9ff"/><rect x="1995.5" y="570.5" width="29" height="111.5" fill="#77c0b4" stroke="#6bb8ab" stroke-width="1"/><rect x="2009" y="682" width="2" height="11" fill="#bdbdbd"/><rect x="2030" y="569" width="32" height="111" fill="#f7f9ff"/><rect x="2031.5" y="570.5" width="29" height="111.5" fill="#77c0b4" stroke="#6bb8ab" stroke-width="1"/><rect x="2045" y="682" width="2" height="11" fill="#bdbdbd"/><rect x="2066" y="569" width="32" height="111" fill="#f7f9ff"/><rect x="2067.5" y="570.5" width="29" height="111.5" fill="#77c0b4" stroke="#6bb8ab" stroke-width="1"/><rect x="2081" y="682" width="2" height="11" fill="#bdbdbd"/><rect x="2102" y="569" width="32" height="111" fill="#f7f9ff"/><rect x="2103.5" y="570.5" width="29" height="111.5" fill="#77c0b4" stroke="#6bb8ab" stroke-width="1"/><rect x="2117" y="682" width="2" height="11" fill="#bdbdbd"/><rect x="2138" y="569" width="32" height="111" fill="#f7f9ff"/><rect x="2139.5" y="570.5" width="29" height="111.5" fill="#77c0b4" stroke="#6bb8ab" stroke-width="1"/><rect x="2153" y="682" width="2" height="11" fill="#bdbdbd"/><rect x="2174" y="569" width="32" height="111" fill="#f7f9ff"/><rect x="2175.5" y="570.5" width="29" height="111.5" fill="#77c0b4" stroke="#6bb8ab" stroke-width="1"/><rect x="2189" y="682" width="2" height="11" fill="#bdbdbd"/><rect x="2210" y="569" width="32" height="111" fill="#f7f9ff"/><rect x="2211.5" y="570.5" width="29" height="111.5" fill="#77c0b4" stroke="#6bb8ab" stroke-width="1"/><rect x="2225" y="682" width="2" height="11" fill="#bdbdbd"/><rect x="2246" y="569" width="32" height="111" fill="#f7f9ff"/><rect x="2247.5" y="570.5" width="29" height="111.5" fill="#77c0b4" stroke="#6bb8ab" stroke-width="1"/><rect x="2261" y="682" width="2" height="11" fill="#bdbdbd"/><rect x="2282" y="569" width="32" height="111" fill="#f7f9ff"/><rect x="2283.5" y="570.5" width="29" height="111.5" fill="#77c0b4" stroke="#6bb8ab" stroke-width="1"/><rect x="2297" y="682" width="2" height="11" fill="#bdbdbd"/><rect x="2318" y="569" width="32" height="111" fill="#f7f9ff"/><rect x="2319.5" y="570.5" width="29" height="111.5" fill="#77c0b4" stroke="#6bb8ab" stroke-width="1"/><rect x="2333" y="682" width="2" height="11" fill="#bdbdbd"/><rect x="2354" y="569" width="32" height="111" fill="#f7f9ff"/><rect x="2355.5" y="570.5" width="29" height="111.5" fill="#77c0b4" stroke="#6bb8ab" stroke-width="1"/><rect x="2369" y="682" width="2" height="11" fill="#bdbdbd"/><rect x="2390" y="569" width="32" height="111" fill="#f7f9ff"/><rect x="2391.5" y="570.5" width="29" height="111.5" fill="#77c0b4" stroke="#6bb8ab" stroke-width="1"/><rect x="2405" y="682" width="2" height="11" fill="#bdbdbd"/><rect x="2426" y="569" width="32" height="111" fill="#f7f9ff"/><rect x="2427.5" y="570.5" width="29" height="111.5" fill="#77c0b4" stroke="#6bb8ab" stroke-width="1"/><rect x="2441" y="682" width="2" height="11" fill="#bdbdbd"/><rect x="2462" y="569" width="32" height="111" fill="#f7f9ff"/><rect x="2463.5" y="570.5" width="29" height="111.5" fill="#77c0b4" stroke="#6bb8ab" stroke-width="1"/><rect x="2477" y="682" width="2" height="11" fill="#bdbdbd"/><rect x="2498" y="569" width="32" height="111" fill="#f7f9ff"/><rect x="2499.5" y="570.5" width="29" height="111.5" fill="#77c0b4" stroke="#6bb8ab" stroke-width="1"/><rect x="2513" y="682" width="2" height="11" fill="#bdbdbd"/><rect x="2534" y="569" width="32" height="111" fill="#f7f9ff"/><rect x="2535.5" y="570.5" width="29" height="111.5" fill="#77c0b4" stroke="#6bb8ab" stroke-width="1"/><rect x="2549" y="682" width="2" height="11" fill="#bdbdbd"/><rect x="2570" y="569" width="32" height="111" fill="#f7f9ff"/><rect x="2571.5" y="570.5" width="29" height="111.5" fill="#77c0b4" stroke="#6bb8ab" stroke-width="1"/><rect x="2585" y="682" width="2" height="11" fill="#bdbdbd"/><rect x="2606" y="569" width="32" height="111" fill="#f7f9ff"/><rect x="2607.5" y="570.5" width="29" height="111.5" fill="#77c0b4" stroke="#6bb8ab" stroke-width="1"/><rect x="2621" y="682" width="2" height="11" fill="#bdbdbd"/><rect x="2642" y="569" width="32" height="111" fill="#f7f9ff"/><rect x="2643.5" y="570.5" width="29" height="111.5" fill="#77c0b4" stroke="#6bb8ab" stroke-width="1"/><rect x="2657" y="682" width="2" height="11" fill="#bdbdbd"/><rect x="2678" y="569" width="32" height="111" fill="#f7f9ff"/><rect x="2679.5" y="570.5" width="29" height="111.5" fill="#77c0b4" stroke="#6bb8ab" stroke-width="1"/><rect x="2693" y="682" width="2" height="11" fill="#bdbdbd"/><rect x="2714" y="569" width="32" height="111" fill="#f7f9ff"/><rect x="2715.5" y="570.5" width="29" height="111.5" fill="#77c0b4" stroke="#6bb8ab" stroke-width="1"/><rect x="2729" y="682" width="2" height="11" fill="#bdbdbd"/><rect x="2750" y="569" width="32" height="111" fill="#f7f9ff"/><rect x="2751.5" y="570.5" width="29" height="111.5" fill="#77c0b4" stroke="#6bb8ab" stroke-width="1"/><rect x="2765" y="682" width="2" height="11" fill="#bdbdbd"/><rect x="2786" y="569" width="32" height="111" fill="#f7f9ff"/><rect x="2787.5" y="570.5" width="29" height="111.5" fill="#77c0b4" stroke="#6bb8ab" stroke-width="1"/><rect x="2801" y="682" width="2" height="11" fill="#bdbdbd"/><rect x="2822" y="569" width="32" height="111" fill="#f7f9ff"/><rect x="2823.5" y="570.5" width="29" height="111.5" fill="#77c0b4" stroke="#6bb8ab" stroke-width="1"/><rect x="2837" y="682" width="2" height="11" fill="#bdbdbd"/><rect x="2858" y="503" width="32" height="177" fill="#f7f9ff"/><rect x="2859.5" y="504.5" width="29" height="177.5" fill="#77c0b4" stroke="#6bb8ab" stroke-width="1"/><rect x="2873" y="682" width="2" height="11" fill="#bdbdbd"/><rect x="2894" y="503" width="32" height="177" fill="#f7f9ff"/><rect x="2895.5" y="504.5" width="29" height="177.5" fill="#77c0b4" stroke="#6bb8ab" stroke-width="1"/><rect x="2909" y="682" width="2" height="11" fill="#bdbdbd"/><rect x="2930" y="503" width="32" height="177" fill="#f7f9ff"/><rect x="2931.5" y="504.5" width="29" height="177.5" fill="#77c0b4" stroke="#6bb8ab" stroke-width="1"/><rect x="2945" y="682" width="2" height="11" fill="#bdbdbd"/><rect x="2966" y="503" width="32" height="177" fill="#f7f9ff"/><rect x="2967.5" y="504.5" width="29" height="177.5" fill="#77c0b4" stroke="#6bb8ab" stroke-width="1"/><rect x="2981" y="682" width="2" height="11" fill="#bdbdbd"/><rect x="3002" y="503" width="32" height="177" fill="#f7f9ff"/><rect x="3003.5" y="504.5" width="29" height="177.5" fill="#77c0b4" stroke="#6bb8ab" stroke-width="1"/><rect x="3017" y="682" width="2" height="11" fill="#bdbdbd"/><rect x="3038" y="503" width="32" height="177" fill="#f7f9ff"/><rect x="3039.5" y="504.5" width="29" height="177.5" fill="#77c0b4" stroke="#6bb8ab" stroke-width="1"/><rect x="3053" y="682" width="2" height="11" fill="#bdbdbd"/><rect x="3074" y="503" width="32" height="177" fill="#f7f9ff"/><rect x="3075.5" y="504.5" width="29" height="177.5" fill="#77c0b4" stroke="#6bb8ab" stroke-width="1"/><rect x="3089" y="682" width="2" height="11" fill="#bdbdbd"/><rect x="3110" y="503" width="32" height="177" fill="#f7f9ff"/><rect x="3111.5" y="504.5" width="29" height="177.5" fill="#77c0b4" stroke="#6bb8ab" stroke-width="1"/><rect x="3125" y="682" width="2" height="11" fill="#bdbdbd"/><rect x="3146" y="503" width="32" height="177" fill="#f7f9ff"/><rect x="3147.5" y="504.5" width="29" height="177.5" fill="#77c0b4" stroke="#6bb8ab" stroke-width="1"/><rect x="3161" y="682" width="2" height="11" fill="#bdbdbd"/><rect x="3182" y="503" width="32" height="177" fill="#f7f9ff"/><rect x="3183.5" y="504.5" width="29" height="177.5" fill="#77c0b4" stroke="#6bb8ab" stroke-width="1"/><rect x="3197" y="682" width="2" height="11" fill="#bdbdbd"/><rect x="3218" y="503" width="32" height="177" fill="#f7f9ff"/><rect x="3219.5" y="504.5" width="29" height="177.5" fill="#77c0b4" stroke="#6bb8ab" stroke-width="1"/><rect x="3233" y="682" width="2" height="11" fill="#bdbdbd"/><rect x="3254" y="503" width="32" height="177" fill="#f7f9ff"/><rect x="3255.5" y="504.5" width="29" height="177.5" fill="#77c0b4" stroke="#6bb8ab" stroke-width="1"/><rect x="3269" y="682" width="2" height="11" fill="#bdbdbd"/><rect x="3290" y="503" width="32" height="177" fill="#f7f9ff"/><rect x="3291.5" y="504.5" width="29" height="177.5" fill="#77c0b4" stroke="#6bb8ab" stroke-width="1"/><rect x="3305" y="682" width="2" height="11" fill="#bdbdbd"/><rect x="3326" y="503" width="32" height="177" fill="#f7f9ff"/><rect x="3327.5" y="504.5" width="29" height="177.5" fill="#77c0b4" stroke="#6bb8ab" stroke-width="1"/><rect x="3341" y="682" width="2" height="11" fill="#bdbdbd"/><rect x="3362" y="503" width="32" height="177" fill="#f7f9ff"/><rect x="3363.5" y="504.5" width="29" height="177.5" fill="#77c0b4" stroke="#6bb8ab" stroke-width="1"/><rect x="3377" y="682" width="2" height="11" fill="#bdbdbd"/><rect x="3398" y="503" width="32" height="177" fill="#f7f9ff"/><rect x="3399.5" y="504.5" width="29" height="177.5" fill="#77c0b4" stroke="#6bb8ab" stroke-width="1"/><rect x="3413" y="682" width="2" height="11" fill="#bdbdbd"/><rect x="3434" y="503" width="32" height="177" fill="#f7f9ff"/><rect x="3435.5" y="504.5" width="29" height="177.5" fill="#77c0b4" stroke="#6bb8ab" stroke-width="1"/><rect x="3449" y="682" width="2" height="11" fill="#bdbdbd"/><rect x="3470" y="503" width="32" height="177" fill="#f7f9ff"/><rect x="3471.5" y="504.5" width="29" height="177.5" fill="#77c0b4" stroke="#6bb8ab" stroke-width="1"/><rect x="3485" y="682" width="2" height="11" fill="#bdbdbd"/><rect x="3506" y="503" width="32" height="177" fill="#f7f9ff"/><rect x="3507.5" y="504.5" width="29" height="177.5" fill="#77c0b4" stroke="#6bb8ab" stroke-width="1"/><rect x="3521" y="682" width="2" height="11" fill="#bdbdbd"/><rect x="3542" y="503" width="32" height="177" fill="#f7f9ff"/><rect x="3543.5" y="504.5" width="29" height="177.5" fill="#77c0b4" stroke="#6bb8ab" stroke-width="1"/><rect x="3557" y="682" width="2" height="11" fill="#bdbdbd"/><rect x="3578" y="503" width="32" height="177" fill="#f7f9ff"/><rect x="3579.5" y="504.5" width="29" height="177.5" fill="#77c0b4" stroke="#6bb8ab" stroke-width="1"/><rect x="3593" y="682" width="2" height="11" fill="#bdbdbd"/><rect x="3614" y="503" width="32" height="177" fill="#f7f9ff"/><rect x="3615.5" y="504.5" width="29" height="177.5" fill="#77c0b4" stroke="#6bb8ab" stroke-width="1"/><rect x="3629" y="682" width="2" height="11" fill="#bdbdbd"/><rect x="3650" y="503" width="32" height="177" fill="#f7f9ff"/><rect x="3651.5" y="504.5" width="29" height="177.5" fill="#77c0b4" stroke="#6bb8ab" stroke-width="1"/><rect x="3665" y="682" width="2" height="11" fill="#bdbdbd"/><rect x="3686" y="503" width="32" height="177" fill="#f7f9ff"/><rect x="3687.5" y="504.5" width="29" height="177.5" fill="#77c0b4" stroke="#6bb8ab" stroke-width="1"/><rect x="3701" y="682" width="2" height="11" fill="#bdbdbd"/></svg>
<div style="position:absolute;top:547.5px;font-size:24.2px;line-height:24.2px;color:#333;font-weight:400;white-space:nowrap;right:3207.0px;text-align:right;">$200,000</div>
<div style="position:absolute;top:668.5px;font-size:24.2px;line-height:24.2px;color:#333;font-weight:400;white-space:nowrap;right:3207.0px;text-align:right;">$0</div>
<div style="position:absolute;top:700.0px;font-size:24.4px;line-height:24.4px;color:#9a9a9a;font-weight:400;white-space:nowrap;left:214.0px;width:1000px;text-align:center;transform:scaleX(0.86);">JUL</div>
<div style="position:absolute;top:729.8px;font-size:24.5px;line-height:24.5px;color:#333;font-weight:400;white-space:nowrap;left:214.0px;width:1000px;text-align:center;">2023</div>
<div style="position:absolute;top:700.0px;font-size:24.4px;line-height:24.4px;color:#9a9a9a;font-weight:400;white-space:nowrap;left:322.0px;width:1000px;text-align:center;transform:scaleX(0.86);">OCT</div>
<div style="position:absolute;top:700.0px;font-size:24.4px;line-height:24.4px;color:#9a9a9a;font-weight:400;white-space:nowrap;left:430.0px;width:1000px;text-align:center;transform:scaleX(0.86);">JAN</div>
<div style="position:absolute;top:700.0px;font-size:24.4px;line-height:24.4px;color:#9a9a9a;font-weight:400;white-space:nowrap;left:538.0px;width:1000px;text-align:center;transform:scaleX(0.86);">APR</div>
<div style="position:absolute;top:700.0px;font-size:24.4px;line-height:24.4px;color:#9a9a9a;font-weight:400;white-space:nowrap;left:646.0px;width:1000px;text-align:center;transform:scaleX(0.86);">JUL</div>
<div style="position:absolute;top:729.8px;font-size:24.5px;line-height:24.5px;color:#333;font-weight:400;white-space:nowrap;left:646.0px;width:1000px;text-align:center;">2024</div>
<div style="position:absolute;top:700.0px;font-size:24.4px;line-height:24.4px;color:#9a9a9a;font-weight:400;white-space:nowrap;left:754.0px;width:1000px;text-align:center;transform:scaleX(0.86);">OCT</div>
<div style="position:absolute;top:700.0px;font-size:24.4px;line-height:24.4px;color:#9a9a9a;font-weight:400;white-space:nowrap;left:862.0px;width:1000px;text-align:center;transform:scaleX(0.86);">JAN</div>
<div style="position:absolute;top:700.0px;font-size:24.4px;line-height:24.4px;color:#9a9a9a;font-weight:400;white-space:nowrap;left:970.0px;width:1000px;text-align:center;transform:scaleX(0.86);">APR</div>
<div style="position:absolute;top:700.0px;font-size:24.4px;line-height:24.4px;color:#9a9a9a;font-weight:400;white-space:nowrap;left:1078.0px;width:1000px;text-align:center;transform:scaleX(0.86);">JUL</div>
<div style="position:absolute;top:729.8px;font-size:24.5px;line-height:24.5px;color:#333;font-weight:400;white-space:nowrap;left:1078.0px;width:1000px;text-align:center;">2025</div>
<div style="position:absolute;top:700.0px;font-size:24.4px;line-height:24.4px;color:#9a9a9a;font-weight:400;white-space:nowrap;left:1186.0px;width:1000px;text-align:center;transform:scaleX(0.86);">OCT</div>
<div style="position:absolute;top:700.0px;font-size:24.4px;line-height:24.4px;color:#9a9a9a;font-weight:400;white-space:nowrap;left:1294.0px;width:1000px;text-align:center;transform:scaleX(0.86);">JAN</div>
<div style="position:absolute;top:700.0px;font-size:24.4px;line-height:24.4px;color:#9a9a9a;font-weight:400;white-space:nowrap;left:1402.0px;width:1000px;text-align:center;transform:scaleX(0.86);">APR</div>
<div style="position:absolute;top:700.0px;font-size:24.4px;line-height:24.4px;color:#9a9a9a;font-weight:400;white-space:nowrap;left:1510.0px;width:1000px;text-align:center;transform:scaleX(0.86);">JUL</div>
<div style="position:absolute;top:729.8px;font-size:24.5px;line-height:24.5px;color:#333;font-weight:400;white-space:nowrap;left:1510.0px;width:1000px;text-align:center;">2026</div>
<div style="position:absolute;top:700.0px;font-size:24.4px;line-height:24.4px;color:#9a9a9a;font-weight:400;white-space:nowrap;left:1618.0px;width:1000px;text-align:center;transform:scaleX(0.86);">OCT</div>
<div style="position:absolute;top:700.0px;font-size:24.4px;line-height:24.4px;color:#9a9a9a;font-weight:400;white-space:nowrap;left:1726.0px;width:1000px;text-align:center;transform:scaleX(0.86);">JAN</div>
<div style="position:absolute;top:700.0px;font-size:24.4px;line-height:24.4px;color:#9a9a9a;font-weight:400;white-space:nowrap;left:1834.0px;width:1000px;text-align:center;transform:scaleX(0.86);">APR</div>
<div style="position:absolute;top:700.0px;font-size:24.4px;line-height:24.4px;color:#9a9a9a;font-weight:400;white-space:nowrap;left:1942.0px;width:1000px;text-align:center;transform:scaleX(0.86);">JUL</div>
<div style="position:absolute;top:729.8px;font-size:24.5px;line-height:24.5px;color:#333;font-weight:400;white-space:nowrap;left:1942.0px;width:1000px;text-align:center;">2027</div>
<div style="position:absolute;top:700.0px;font-size:24.4px;line-height:24.4px;color:#9a9a9a;font-weight:400;white-space:nowrap;left:2050.0px;width:1000px;text-align:center;transform:scaleX(0.86);">OCT</div>
<div style="position:absolute;top:700.0px;font-size:24.4px;line-height:24.4px;color:#9a9a9a;font-weight:400;white-space:nowrap;left:2158.0px;width:1000px;text-align:center;transform:scaleX(0.86);">JAN</div>
<div style="position:absolute;top:700.0px;font-size:24.4px;line-height:24.4px;color:#9a9a9a;font-weight:400;white-space:nowrap;left:2266.0px;width:1000px;text-align:center;transform:scaleX(0.86);">APR</div>
<div style="position:absolute;top:700.0px;font-size:24.4px;line-height:24.4px;color:#9a9a9a;font-weight:400;white-space:nowrap;left:2374.0px;width:1000px;text-align:center;transform:scaleX(0.86);">JUL</div>
<div style="position:absolute;top:729.8px;font-size:24.5px;line-height:24.5px;color:#333;font-weight:400;white-space:nowrap;left:2374.0px;width:1000px;text-align:center;">2028</div>
<div style="position:absolute;top:700.0px;font-size:24.4px;line-height:24.4px;color:#9a9a9a;font-weight:400;white-space:nowrap;left:2482.0px;width:1000px;text-align:center;transform:scaleX(0.86);">OCT</div>
<div style="position:absolute;top:700.0px;font-size:24.4px;line-height:24.4px;color:#9a9a9a;font-weight:400;white-space:nowrap;left:2590.0px;width:1000px;text-align:center;transform:scaleX(0.86);">JAN</div>
<div style="position:absolute;top:700.0px;font-size:24.4px;line-height:24.4px;color:#9a9a9a;font-weight:400;white-space:nowrap;left:2698.0px;width:1000px;text-align:center;transform:scaleX(0.86);">APR</div>
<div style="position:absolute;top:700.0px;font-size:24.4px;line-height:24.4px;color:#9a9a9a;font-weight:400;white-space:nowrap;left:2806.0px;width:1000px;text-align:center;transform:scaleX(0.86);">JUL</div>
<div style="position:absolute;top:729.8px;font-size:24.5px;line-height:24.5px;color:#333;font-weight:400;white-space:nowrap;left:2806.0px;width:1000px;text-align:center;">2029</div>
<div style="position:absolute;top:700.0px;font-size:24.4px;line-height:24.4px;color:#9a9a9a;font-weight:400;white-space:nowrap;left:2914.0px;width:1000px;text-align:center;transform:scaleX(0.86);">OCT</div>
<div style="position:absolute;top:700.0px;font-size:24.4px;line-height:24.4px;color:#9a9a9a;font-weight:400;white-space:nowrap;left:3022.0px;width:1000px;text-align:center;transform:scaleX(0.86);">JAN</div>
<div style="position:absolute;top:700.0px;font-size:24.4px;line-height:24.4px;color:#9a9a9a;font-weight:400;white-space:nowrap;left:3130.0px;width:1000px;text-align:center;transform:scaleX(0.86);">APR</div>
<div style="position:absolute;left:3171px;top:820px;width:183px;height:59px;background:#f7f9fe;box-shadow:0 3px 2px rgba(0,0,0,0.18);"></div>
<svg style="position:absolute;left:3203px;top:833px;" width="34" height="34" viewBox="0 0 34 34"><path d="M25 1.5 Q27 0 29 1.5 L32.5 5 Q34 7 32.5 9 L29 12.5 L21.5 5 Z M19.5 7 L27 14.5 L11 30.5 Q9.5 32 7 32.5 L1 33.5 L2 27.5 Q2.5 25 4 23.5 Z" fill="#1e2127"/><path d="M4 27 L3.5 30.5 L7 30" fill="none" stroke="#f7f9fe" stroke-width="1.5"/></svg>
<div style="position:absolute;top:836.9px;font-size:29.61px;line-height:29.61px;color:#1e2127;font-weight:400;white-space:nowrap;left:3261.0px;transform:scaleX(0.9192);transform-origin:left center;">EDIT</div>
<div style="position:absolute;left:3368px;top:820px;width:208px;height:59px;background:#dc9aab;box-shadow:0 3px 2px rgba(0,0,0,0.10);"></div>
<svg style="position:absolute;left:3400px;top:833px;" width="34" height="34" viewBox="0 0 34 34"><path d="M8.5 9 Q12.5 5 18 5 Q29 5 29 17 Q29 29 18 29 Q11 29 7 24" fill="none" stroke="#fff" stroke-width="4" stroke-linecap="round"/><path d="M3 3 L3 14 L14 14 Z" fill="#fff"/></svg>
<div style="position:absolute;top:836.9px;font-size:29.61px;line-height:29.61px;color:#ffffff;font-weight:400;white-space:nowrap;left:3459.0px;transform:scaleX(0.9750);transform-origin:left center;">UNDO</div>
<div style="position:absolute;left:3590px;top:820px;width:188px;height:59px;background:#f5f8fd;box-shadow:0 3px 2px rgba(0,0,0,0.07);"></div>
<svg style="position:absolute;left:3623px;top:835px;" width="32" height="30" viewBox="0 0 32 30"><path d="M3 16 L11 24 L29 5" fill="none" stroke="#8a9099" stroke-width="4.4" stroke-linecap="round" stroke-linejoin="round"/></svg>
<div style="position:absolute;top:836.9px;font-size:29.61px;line-height:29.61px;color:#8a9099;font-weight:400;white-space:nowrap;left:3680.0px;transform:scaleX(0.8594);transform-origin:left center;">SAVE</div>
<div style="position:absolute;left:488px;top:890px;width:3303px;height:102px;background:#e6e5ea;border-radius:0 0 10px 0;"></div>
<div style="position:absolute;left:500px;top:911px;width:477px;height:61px;background:#ffffff;border-radius:7px;box-shadow:0 2px 3px rgba(0,0,0,0.22);"></div>
<div style="position:absolute;top:929.1px;font-size:27px;line-height:27px;color:#2a2d33;font-weight:400;white-space:nowrap;left:516.5px;">FY24</div>
<svg style="position:absolute;left:936px;top:932px;" width="26" height="17" viewBox="0 0 26 17"><path d="M3 3 L13 13 L23 3" fill="none" stroke="#1e2127" stroke-width="4.2" stroke-linecap="round" stroke-linejoin="round"/></svg>
<div style="position:absolute;left:1003px;top:911px;width:154px;height:61px;background:#f4f7fd;box-shadow:0 4px 2px rgba(0,0,0,0.22);"></div>
<div style="position:absolute;top:927.6px;font-size:28.77px;line-height:28.77px;color:#1e2127;font-weight:400;white-space:nowrap;left:1034.0px;transform:scaleX(0.9434);transform-origin:left center;">TODAY</div>
<div style="position:absolute;left:1167px;top:890px;width:2px;height:95px;background:#cfcfd4;"></div>
<svg style="position:absolute;left:1178px;top:927px;" width="27" height="29" viewBox="0 0 27 29"><path d="M7 12 L7 8.5 Q7 2 13.5 2 Q20 2 20 8.5 L20 12" fill="none" stroke="#303030" stroke-width="3.2"/><rect x="1" y="11.5" width="25" height="17" rx="4" fill="#303030"/></svg>
<div style="position:absolute;top:927.6px;font-size:28.77px;line-height:28.77px;color:#303030;font-weight:400;white-space:nowrap;left:1234.6px;transform:scaleX(0.9273);transform-origin:left center;">Plan</div>
<div style="position:absolute;top:910.3px;font-size:22.1px;line-height:22.1px;color:#555;font-weight:400;white-space:nowrap;right:1645.0px;text-align:right;">Total</div>
<div style="position:absolute;top:947.2px;font-size:28.77px;line-height:28.77px;color:#2a2d33;font-weight:400;white-space:nowrap;right:1645.0px;text-align:right;transform:scaleX(0.9732);transform-origin:right center;">$16,056,000</div>
<div style="position:absolute;left:2206px;top:911px;width:59px;height:60px;background:#f7f9fe;border-radius:9px;box-shadow:0 3px 3px rgba(0,0,0,0.22);"></div>
<svg style="position:absolute;left:2206px;top:911px;" width="60" height="60" viewBox="0 0 60 60"><path d="M15.5 18.5 L15.5 37.5 Q15.5 41.5 19.5 41.5 L44 41.5" fill="none" stroke="#1e2127" stroke-width="3.6" stroke-linecap="round" stroke-linejoin="round"/><path d="M24 22 L35.8 22 M24 28 L31.8 28 M24 34 L39.7 34" fill="none" stroke="#1e2127" stroke-width="3.7" stroke-linecap="round"/></svg>
<div style="position:absolute;left:1169px;top:986px;width:1108px;height:6px;background:#74c0b3;"></div>
<div style="position:absolute;left:2276px;top:890px;width:2px;height:95px;background:#cfcfd4;"></div>
<div style="position:absolute;top:927.6px;font-size:28.77px;line-height:28.77px;color:#303030;font-weight:400;white-space:nowrap;left:2288.0px;transform:scaleX(0.9930);transform-origin:left center;">Actual</div>
<div style="position:absolute;top:910.3px;font-size:22.1px;line-height:22.1px;color:#555;font-weight:400;white-space:nowrap;right:465.0px;text-align:right;">Total</div>
<div style="position:absolute;top:947.2px;font-size:28.77px;line-height:28.77px;color:#2a2d33;font-weight:400;white-space:nowrap;right:465.0px;text-align:right;transform:scaleX(0.9792);transform-origin:right center;">$369,000</div>
<div style="position:absolute;left:2277px;top:986px;width:1107px;height:6px;background:#437a70;"></div>
<div style="position:absolute;left:489px;top:1004px;width:122px;height:64px;background:#ffffff;border:2px solid #c8c8c8;border-radius:6px;box-sizing:border-box;"></div>
<div style="position:absolute;top:1023.0px;font-size:28.63px;line-height:28.63px;color:#2a2d33;font-weight:400;white-space:nowrap;left:50.0px;width:1000px;text-align:center;transform:scaleX(0.8885);transform-origin:center center;">FY24</div>
<svg style="position:absolute;left:547px;top:1068px" width="3" height="1196"><line x1="1.5" y1="0" x2="1.5" y2="1196" stroke="#c8c8c8" stroke-width="2" stroke-dasharray="5.5 4"/></svg>
<svg style="position:absolute;left:539px;top:1104px" width="20" height="20"><circle cx="10" cy="10" r="6.9" fill="#fdfdfd" stroke="#c8c8c8" stroke-width="4"/></svg>
<div style="position:absolute;top:1100.7px;font-size:29px;line-height:29px;color:#2a2d33;font-weight:400;white-space:nowrap;right:2692.0px;text-align:right;">Jul</div>
<div style="position:absolute;left:1169px;top:1078.5px;width:1090px;height:70.5px;background:#f2f2f2;border:2px solid #c8c8c8;border-radius:7px;box-sizing:border-box;box-shadow:0 2px 2px rgba(0,0,0,0.09);overflow:hidden;"></div>
<div style="position:absolute;left:1171px;top:1080.5px;width:55px;height:66.5px;background:#f2f2f2;border-radius:5px 0 0 5px;"></div>
<div style="position:absolute;left:1226px;top:1080.5px;width:2px;height:66.5px;background:#c8c8c8;"></div>
<div style="position:absolute;top:1101.6px;font-size:26px;line-height:26px;color:#777;font-weight:400;white-space:nowrap;left:1190.5px;">$</div>
<div style="position:absolute;top:1100.2px;font-size:27.6px;line-height:27.6px;color:#555;font-weight:400;white-space:nowrap;right:1603.0px;text-align:right;">123,000.00</div>
<div style="position:absolute;left:2279px;top:1078.5px;width:1090px;height:70.5px;background:#ffffff;border:2px solid #c8c8c8;border-radius:7px;box-sizing:border-box;box-shadow:0 2px 2px rgba(0,0,0,0.09);overflow:hidden;"></div>
<div style="position:absolute;left:2281px;top:1080.5px;width:55px;height:66.5px;background:#fafafa;border-radius:5px 0 0 5px;"></div>
<div style="position:absolute;left:2336px;top:1080.5px;width:2px;height:66.5px;background:#c8c8c8;"></div>
<div style="position:absolute;top:1101.6px;font-size:26px;line-height:26px;color:#777;font-weight:400;white-space:nowrap;left:2300.5px;">$</div>
<div style="position:absolute;top:1100.2px;font-size:27.6px;line-height:27.6px;color:#555;font-weight:400;white-space:nowrap;right:493.0px;text-align:right;">123,000.00</div>
<svg style="position:absolute;left:539px;top:1196px" width="20" height="20"><circle cx="10" cy="10" r="6.9" fill="#fdfdfd" stroke="#c8c8c8" stroke-width="4"/></svg>
<div style="position:absolute;top:1192.7px;font-size:29px;line-height:29px;color:#2a2d33;font-weight:400;white-space:nowrap;right:2692.0px;text-align:right;">Aug</div>
<div style="position:absolute;left:1169px;top:1170.5px;width:1090px;height:70.5px;background:#f2f2f2;border:2px solid #c8c8c8;border-radius:7px;box-sizing:border-box;box-shadow:0 2px 2px rgba(0,0,0,0.09);overflow:hidden;"></div>
<div style="position:absolute;left:1171px;top:1172.5px;width:55px;height:66.5px;background:#f2f2f2;border-radius:5px 0 0 5px;"></div>
<div style="position:absolute;left:1226px;top:1172.5px;width:2px;height:66.5px;background:#c8c8c8;"></div>
<div style="position:absolute;top:1193.6px;font-size:26px;line-height:26px;color:#777;font-weight:400;white-space:nowrap;left:1190.5px;">$</div>
<div style="position:absolute;top:1192.2px;font-size:27.6px;line-height:27.6px;color:#555;font-weight:400;white-space:nowrap;right:1603.0px;text-align:right;">123,000.00</div>
<div style="position:absolute;left:2279px;top:1170.5px;width:1090px;height:70.5px;background:#ffffff;border:2px solid #c8c8c8;border-radius:7px;box-sizing:border-box;box-shadow:0 2px 2px rgba(0,0,0,0.09);overflow:hidden;"></div>
<div style="position:absolute;left:2281px;top:1172.5px;width:55px;height:66.5px;background:#fafafa;border-radius:5px 0 0 5px;"></div>
<div style="position:absolute;left:2336px;top:1172.5px;width:2px;height:66.5px;background:#c8c8c8;"></div>
<div style="position:absolute;top:1193.6px;font-size:26px;line-height:26px;color:#777;font-weight:400;white-space:nowrap;left:2300.5px;">$</div>
<div style="position:absolute;top:1192.2px;font-size:27.6px;line-height:27.6px;color:#555;font-weight:400;white-space:nowrap;right:493.0px;text-align:right;">123,000.00</div>
<svg style="position:absolute;left:539px;top:1288px" width="20" height="20"><circle cx="10" cy="10" r="6.9" fill="#fdfdfd" stroke="#c8c8c8" stroke-width="4"/></svg>
<div style="position:absolute;top:1284.7px;font-size:29px;line-height:29px;color:#2a2d33;font-weight:400;white-space:nowrap;right:2692.0px;text-align:right;">Sep</div>
<div style="position:absolute;left:1169px;top:1262.5px;width:1090px;height:70.5px;background:#f2f2f2;border:2px solid #c8c8c8;border-radius:7px;box-sizing:border-box;box-shadow:0 2px 2px rgba(0,0,0,0.09);overflow:hidden;"></div>
<div style="position:absolute;left:1171px;top:1264.5px;width:55px;height:66.5px;background:#f2f2f2;border-radius:5px 0 0 5px;"></div>
<div style="position:absolute;left:1226px;top:1264.5px;width:2px;height:66.5px;background:#c8c8c8;"></div>
<div style="position:absolute;top:1285.6px;font-size:26px;line-height:26px;color:#777;font-weight:400;white-space:nowrap;left:1190.5px;">$</div>
<div style="position:absolute;top:1284.2px;font-size:27.6px;line-height:27.6px;color:#555;font-weight:400;white-space:nowrap;right:1603.0px;text-align:right;">123,000.00</div>
<div style="position:absolute;left:2279px;top:1262.5px;width:1090px;height:70.5px;background:#ffffff;border:2px solid #c8c8c8;border-radius:7px;box-sizing:border-box;box-shadow:0 2px 2px rgba(0,0,0,0.09);overflow:hidden;"></div>
<div style="position:absolute;left:2281px;top:1264.5px;width:55px;height:66.5px;background:#fafafa;border-radius:5px 0 0 5px;"></div>
<div style="position:absolute;left:2336px;top:1264.5px;width:2px;height:66.5px;background:#c8c8c8;"></div>
<div style="position:absolute;top:1285.6px;font-size:26px;line-height:26px;color:#777;font-weight:400;white-space:nowrap;left:2300.5px;">$</div>
<div style="position:absolute;top:1284.2px;font-size:27.6px;line-height:27.6px;color:#555;font-weight:400;white-space:nowrap;right:493.0px;text-align:right;">123,000.00</div>
<svg style="position:absolute;left:539px;top:1380px" width="20" height="20"><circle cx="10" cy="10" r="6.9" fill="#fdfdfd" stroke="#c8c8c8" stroke-width="4"/></svg>
<div style="position:absolute;top:1376.7px;font-size:29px;line-height:29px;color:#2a2d33;font-weight:400;white-space:nowrap;right:2692.0px;text-align:right;">Oct</div>
<div style="position:absolute;left:1169px;top:1354.5px;width:1090px;height:70.5px;background:#f2f2f2;border:2px solid #c8c8c8;border-radius:7px;box-sizing:border-box;box-shadow:0 2px 2px rgba(0,0,0,0.09);overflow:hidden;"></div>
<div style="position:absolute;left:1171px;top:1356.5px;width:55px;height:66.5px;background:#f2f2f2;border-radius:5px 0 0 5px;"></div>
<div style="position:absolute;left:1226px;top:1356.5px;width:2px;height:66.5px;background:#c8c8c8;"></div>
<div style="position:absolute;top:1377.6px;font-size:26px;line-height:26px;color:#777;font-weight:400;white-space:nowrap;left:1190.5px;">$</div>
<div style="position:absolute;top:1376.2px;font-size:27.6px;line-height:27.6px;color:#555;font-weight:400;white-space:nowrap;right:1603.0px;text-align:right;">123,000.00</div>
<div style="position:absolute;left:2279px;top:1354.5px;width:1090px;height:70.5px;background:#ffffff;border:2px solid #c8c8c8;border-radius:7px;box-sizing:border-box;box-shadow:0 2px 2px rgba(0,0,0,0.09);overflow:hidden;"></div>
<div style="position:absolute;left:2281px;top:1356.5px;width:55px;height:66.5px;background:#fafafa;border-radius:5px 0 0 5px;"></div>
<div style="position:absolute;left:2336px;top:1356.5px;width:2px;height:66.5px;background:#c8c8c8;"></div>
<div style="position:absolute;top:1377.6px;font-size:26px;line-height:26px;color:#777;font-weight:400;white-space:nowrap;left:2300.5px;">$</div>
<svg style="position:absolute;left:539px;top:1472px" width="20" height="20"><circle cx="10" cy="10" r="6.9" fill="#fdfdfd" stroke="#c8c8c8" stroke-width="4"/></svg>
<div style="position:absolute;top:1468.7px;font-size:29px;line-height:29px;color:#2a2d33;font-weight:400;white-space:nowrap;right:2692.0px;text-align:right;">Nov</div>
<div style="position:absolute;left:1169px;top:1446.5px;width:1090px;height:70.5px;background:#f2f2f2;border:2px solid #c8c8c8;border-radius:7px;box-sizing:border-box;box-shadow:0 2px 2px rgba(0,0,0,0.09);overflow:hidden;"></div>
<div style="position:absolute;left:1171px;top:1448.5px;width:55px;height:66.5px;background:#f2f2f2;border-radius:5px 0 0 5px;"></div>
<div style="position:absolute;left:1226px;top:1448.5px;width:2px;height:66.5px;background:#c8c8c8;"></div>
<div style="position:absolute;top:1469.6px;font-size:26px;line-height:26px;color:#777;font-weight:400;white-space:nowrap;left:1190.5px;">$</div>
<div style="position:absolute;top:1468.2px;font-size:27.6px;line-height:27.6px;color:#555;font-weight:400;white-space:nowrap;right:1603.0px;text-align:right;">123,000.00</div>
<div style="position:absolute;left:2279px;top:1446.5px;width:1090px;height:70.5px;background:#ffffff;border:2px solid #c8c8c8;border-radius:7px;box-sizing:border-box;box-shadow:0 2px 2px rgba(0,0,0,0.09);overflow:hidden;"></div>
<div style="position:absolute;left:2281px;top:1448.5px;width:55px;height:66.5px;background:#fafafa;border-radius:5px 0 0 5px;"></div>
<div style="position:absolute;left:2336px;top:1448.5px;width:2px;height:66.5px;background:#c8c8c8;"></div>
<div style="position:absolute;top:1469.6px;font-size:26px;line-height:26px;color:#777;font-weight:400;white-space:nowrap;left:2300.5px;">$</div>
<svg style="position:absolute;left:539px;top:1564px" width="20" height="20"><circle cx="10" cy="10" r="6.9" fill="#fdfdfd" stroke="#c8c8c8" stroke-width="4"/></svg>
<div style="position:absolute;top:1560.7px;font-size:29px;line-height:29px;color:#2a2d33;font-weight:400;white-space:nowrap;right:2692.0px;text-align:right;">Dec</div>
<div style="position:absolute;left:1169px;top:1538.5px;width:1090px;height:70.5px;background:#f2f2f2;border:2px solid #c8c8c8;border-radius:7px;box-sizing:border-box;box-shadow:0 2px 2px rgba(0,0,0,0.09);overflow:hidden;"></div>
<div style="position:absolute;left:1171px;top:1540.5px;width:55px;height:66.5px;background:#f2f2f2;border-radius:5px 0 0 5px;"></div>
<div style="position:absolute;left:1226px;top:1540.5px;width:2px;height:66.5px;background:#c8c8c8;"></div>
<div style="position:absolute;top:1561.6px;font-size:26px;line-height:26px;color:#777;font-weight:400;white-space:nowrap;left:1190.5px;">$</div>
<div style="position:absolute;top:1560.2px;font-size:27.6px;line-height:27.6px;color:#555;font-weight:400;white-space:nowrap;right:1603.0px;text-align:right;">123,000.00</div>
<div style="position:absolute;left:2279px;top:1538.5px;width:1090px;height:70.5px;background:#ffffff;border:2px solid #c8c8c8;border-radius:7px;box-sizing:border-box;box-shadow:0 2px 2px rgba(0,0,0,0.09);overflow:hidden;"></div>
<div style="position:absolute;left:2281px;top:1540.5px;width:55px;height:66.5px;background:#fafafa;border-radius:5px 0 0 5px;"></div>
<div style="position:absolute;left:2336px;top:1540.5px;width:2px;height:66.5px;background:#c8c8c8;"></div>
<div style="position:absolute;top:1561.6px;font-size:26px;line-height:26px;color:#777;font-weight:400;white-space:nowrap;left:2300.5px;">$</div>
<svg style="position:absolute;left:539px;top:1656px" width="20" height="20"><circle cx="10" cy="10" r="6.9" fill="#fdfdfd" stroke="#c8c8c8" stroke-width="4"/></svg>
<div style="position:absolute;top:1652.7px;font-size:29px;line-height:29px;color:#2a2d33;font-weight:400;white-space:nowrap;right:2692.0px;text-align:right;">Jan</div>
<div style="position:absolute;left:1169px;top:1630.5px;width:1090px;height:70.5px;background:#f2f2f2;border:2px solid #c8c8c8;border-radius:7px;box-sizing:border-box;box-shadow:0 2px 2px rgba(0,0,0,0.09);overflow:hidden;"></div>
<div style="position:absolute;left:1171px;top:1632.5px;width:55px;height:66.5px;background:#f2f2f2;border-radius:5px 0 0 5px;"></div>
<div style="position:absolute;left:1226px;top:1632.5px;width:2px;height:66.5px;background:#c8c8c8;"></div>
<div style="position:absolute;top:1653.6px;font-size:26px;line-height:26px;color:#777;font-weight:400;white-space:nowrap;left:1190.5px;">$</div>
<div style="position:absolute;top:1652.2px;font-size:27.6px;line-height:27.6px;color:#555;font-weight:400;white-space:nowrap;right:1603.0px;text-align:right;">123,000.00</div>
<div style="position:absolute;left:2279px;top:1630.5px;width:1090px;height:70.5px;background:#ffffff;border:2px solid #c8c8c8;border-radius:7px;box-sizing:border-box;box-shadow:0 2px 2px rgba(0,0,0,0.09);overflow:hidden;"></div>
<div style="position:absolute;left:2281px;top:1632.5px;width:55px;height:66.5px;background:#fafafa;border-radius:5px 0 0 5px;"></div>
<div style="position:absolute;left:2336px;top:1632.5px;width:2px;height:66.5px;background:#c8c8c8;"></div>
<div style="position:absolute;top:1653.6px;font-size:26px;line-height:26px;color:#777;font-weight:400;white-space:nowrap;left:2300.5px;">$</div>
<svg style="position:absolute;left:539px;top:1748px" width="20" height="20"><circle cx="10" cy="10" r="6.9" fill="#fdfdfd" stroke="#c8c8c8" stroke-width="4"/></svg>
<div style="position:absolute;top:1744.7px;font-size:29px;line-height:29px;color:#2a2d33;font-weight:400;white-space:nowrap;right:2692.0px;text-align:right;">Feb</div>
<div style="position:absolute;left:1169px;top:1722.5px;width:1090px;height:70.5px;background:#f2f2f2;border:2px solid #c8c8c8;border-radius:7px;box-sizing:border-box;box-shadow:0 2px 2px rgba(0,0,0,0.09);overflow:hidden;"></div>
<div style="position:absolute;left:1171px;top:1724.5px;width:55px;height:66.5px;background:#f2f2f2;border-radius:5px 0 0 5px;"></div>
<div style="position:absolute;left:1226px;top:1724.5px;width:2px;height:66.5px;background:#c8c8c8;"></div>
<div style="position:absolute;top:1745.6px;font-size:26px;line-height:26px;color:#777;font-weight:400;white-space:nowrap;left:1190.5px;">$</div>
<div style="position:absolute;top:1744.2px;font-size:27.6px;line-height:27.6px;color:#555;font-weight:400;white-space:nowrap;right:1603.0px;text-align:right;">123,000.00</div>
<div style="position:absolute;left:2279px;top:1722.5px;width:1090px;height:70.5px;background:#ffffff;border:2px solid #c8c8c8;border-radius:7px;box-sizing:border-box;box-shadow:0 2px 2px rgba(0,0,0,0.09);overflow:hidden;"></div>
<div style="position:absolute;left:2281px;top:1724.5px;width:55px;height:66.5px;background:#fafafa;border-radius:5px 0 0 5px;"></div>
<div style="position:absolute;left:2336px;top:1724.5px;width:2px;height:66.5px;background:#c8c8c8;"></div>
<div style="position:absolute;top:1745.6px;font-size:26px;line-height:26px;color:#777;font-weight:400;white-space:nowrap;left:2300.5px;">$</div>
<svg style="position:absolute;left:539px;top:1840px" width="20" height="20"><circle cx="10" cy="10" r="6.9" fill="#fdfdfd" stroke="#c8c8c8" stroke-width="4"/></svg>
<div style="position:absolute;top:1836.7px;font-size:29px;line-height:29px;color:#2a2d33;font-weight:400;white-space:nowrap;right:2692.0px;text-align:right;">Mar</div>
<div style="position:absolute;left:1169px;top:1814.5px;width:1090px;height:70.5px;background:#f2f2f2;border:2px solid #c8c8c8;border-radius:7px;box-sizing:border-box;box-shadow:0 2px 2px rgba(0,0,0,0.09);overflow:hidden;"></div>
<div style="position:absolute;left:1171px;top:1816.5px;width:55px;height:66.5px;background:#f2f2f2;border-radius:5px 0 0 5px;"></div>
<div style="position:absolute;left:1226px;top:1816.5px;width:2px;height:66.5px;background:#c8c8c8;"></div>
<div style="position:absolute;top:1837.6px;font-size:26px;line-height:26px;color:#777;font-weight:400;white-space:nowrap;left:1190.5px;">$</div>
<div style="position:absolute;top:1836.2px;font-size:27.6px;line-height:27.6px;color:#555;font-weight:400;white-space:nowrap;right:1603.0px;text-align:right;">123,000.00</div>
<div style="position:absolute;left:2279px;top:1814.5px;width:1090px;height:70.5px;background:#ffffff;border:2px solid #c8c8c8;border-radius:7px;box-sizing:border-box;box-shadow:0 2px 2px rgba(0,0,0,0.09);overflow:hidden;"></div>
<div style="position:absolute;left:2281px;top:1816.5px;width:55px;height:66.5px;background:#fafafa;border-radius:5px 0 0 5px;"></div>
<div style="position:absolute;left:2336px;top:1816.5px;width:2px;height:66.5px;background:#c8c8c8;"></div>
<div style="position:absolute;top:1837.6px;font-size:26px;line-height:26px;color:#777;font-weight:400;white-space:nowrap;left:2300.5px;">$</div>
<svg style="position:absolute;left:539px;top:1932px" width="20" height="20"><circle cx="10" cy="10" r="6.9" fill="#fdfdfd" stroke="#c8c8c8" stroke-width="4"/></svg>
<div style="position:absolute;top:1928.7px;font-size:29px;line-height:29px;color:#2a2d33;font-weight:400;white-space:nowrap;right:2692.0px;text-align:right;">Apr</div>
<div style="position:absolute;left:1169px;top:1906.5px;width:1090px;height:70.5px;background:#f2f2f2;border:2px solid #c8c8c8;border-radius:7px;box-sizing:border-box;box-shadow:0 2px 2px rgba(0,0,0,0.09);overflow:hidden;"></div>
<div style="position:absolute;left:1171px;top:1908.5px;width:55px;height:66.5px;background:#f2f2f2;border-radius:5px 0 0 5px;"></div>
<div style="position:absolute;left:1226px;top:1908.5px;width:2px;height:66.5px;background:#c8c8c8;"></div>
<div style="position:absolute;top:1929.6px;font-size:26px;line-height:26px;color:#777;font-weight:400;white-space:nowrap;left:1190.5px;">$</div>
<div style="position:absolute;top:1928.2px;font-size:27.6px;line-height:27.6px;color:#555;font-weight:400;white-space:nowrap;right:1603.0px;text-align:right;">123,000.00</div>
<div style="position:absolute;left:2279px;top:1906.5px;width:1090px;height:70.5px;background:#ffffff;border:2px solid #c8c8c8;border-radius:7px;box-sizing:border-box;box-shadow:0 2px 2px rgba(0,0,0,0.09);overflow:hidden;"></div>
<div style="position:absolute;left:2281px;top:1908.5px;width:55px;height:66.5px;background:#fafafa;border-radius:5px 0 0 5px;"></div>
<div style="position:absolute;left:2336px;top:1908.5px;width:2px;height:66.5px;background:#c8c8c8;"></div>
<div style="position:absolute;top:1929.6px;font-size:26px;line-height:26px;color:#777;font-weight:400;white-space:nowrap;left:2300.5px;">$</div>
<svg style="position:absolute;left:539px;top:2024px" width="20" height="20"><circle cx="10" cy="10" r="6.9" fill="#fdfdfd" stroke="#c8c8c8" stroke-width="4"/></svg>
<div style="position:absolute;top:2020.7px;font-size:29px;line-height:29px;color:#2a2d33;font-weight:400;white-space:nowrap;right:2692.0px;text-align:right;">May</div>
<div style="position:absolute;left:1169px;top:1998.5px;width:1090px;height:70.5px;background:#f2f2f2;border:2px solid #c8c8c8;border-radius:7px;box-sizing:border-box;box-shadow:0 2px 2px rgba(0,0,0,0.09);overflow:hidden;"></div>
<div style="position:absolute;left:1171px;top:2000.5px;width:55px;height:66.5px;background:#f2f2f2;border-radius:5px 0 0 5px;"></div>
<div style="position:absolute;left:1226px;top:2000.5px;width:2px;height:66.5px;background:#c8c8c8;"></div>
<div style="position:absolute;top:2021.6px;font-size:26px;line-height:26px;color:#777;font-weight:400;white-space:nowrap;left:1190.5px;">$</div>
<div style="position:absolute;top:2020.2px;font-size:27.6px;line-height:27.6px;color:#555;font-weight:400;white-space:nowrap;right:1603.0px;text-align:right;">123,000.00</div>
<div style="position:absolute;left:2279px;top:1998.5px;width:1090px;height:70.5px;background:#ffffff;border:2px solid #c8c8c8;border-radius:7px;box-sizing:border-box;box-shadow:0 2px 2px rgba(0,0,0,0.09);overflow:hidden;"></div>
<div style="position:absolute;left:2281px;top:2000.5px;width:55px;height:66.5px;background:#fafafa;border-radius:5px 0 0 5px;"></div>
<div style="position:absolute;left:2336px;top:2000.5px;width:2px;height:66.5px;background:#c8c8c8;"></div>
<div style="position:absolute;top:2021.6px;font-size:26px;line-height:26px;color:#777;font-weight:400;white-space:nowrap;left:2300.5px;">$</div>
<svg style="position:absolute;left:539px;top:2116px" width="20" height="20"><circle cx="10" cy="10" r="6.9" fill="#fdfdfd" stroke="#c8c8c8" stroke-width="4"/></svg>
<div style="position:absolute;top:2112.7px;font-size:29px;line-height:29px;color:#2a2d33;font-weight:400;white-space:nowrap;right:2692.0px;text-align:right;">Jun</div>
<div style="position:absolute;left:1169px;top:2090.5px;width:1090px;height:70.5px;background:#f2f2f2;border:2px solid #c8c8c8;border-radius:7px;box-sizing:border-box;box-shadow:0 2px 2px rgba(0,0,0,0.09);overflow:hidden;"></div>
<div style="position:absolute;left:1171px;top:2092.5px;width:55px;height:66.5px;background:#f2f2f2;border-radius:5px 0 0 5px;"></div>
<div style="position:absolute;left:1226px;top:2092.5px;width:2px;height:66.5px;background:#c8c8c8;"></div>
<div style="position:absolute;top:2113.6px;font-size:26px;line-height:26px;color:#777;font-weight:400;white-space:nowrap;left:1190.5px;">$</div>
<div style="position:absolute;top:2112.2px;font-size:27.6px;line-height:27.6px;color:#555;font-weight:400;white-space:nowrap;right:1603.0px;text-align:right;">123,000.00</div>
<div style="position:absolute;left:2279px;top:2090.5px;width:1090px;height:70.5px;background:#ffffff;border:2px solid #c8c8c8;border-radius:7px;box-sizing:border-box;box-shadow:0 2px 2px rgba(0,0,0,0.09);overflow:hidden;"></div>
<div style="position:absolute;left:2281px;top:2092.5px;width:55px;height:66.5px;background:#fafafa;border-radius:5px 0 0 5px;"></div>
<div style="position:absolute;left:2336px;top:2092.5px;width:2px;height:66.5px;background:#c8c8c8;"></div>
<div style="position:absolute;top:2113.6px;font-size:26px;line-height:26px;color:#777;font-weight:400;white-space:nowrap;left:2300.5px;">$</div>
<svg style="position:absolute;left:539px;top:2208px" width="20" height="20"><circle cx="10" cy="10" r="6.9" fill="#fdfdfd" stroke="#c8c8c8" stroke-width="4"/></svg>
<div style="position:absolute;top:2205.9px;font-size:27.5px;line-height:27.5px;color:#2a2d33;font-weight:400;white-space:nowrap;right:2692.0px;text-align:right;">FY24 Total</div>
<div style="position:absolute;left:1169px;top:2182.5px;width:1090px;height:70.5px;background:#f2f2f2;border:2px solid #c8c8c8;border-radius:7px;box-sizing:border-box;box-shadow:0 2px 2px rgba(0,0,0,0.09);overflow:hidden;"></div>
<div style="position:absolute;top:2205.6px;font-size:26px;line-height:26px;color:#777;font-weight:400;white-space:nowrap;left:1190.5px;">$</div>
<div style="position:absolute;top:2204.0px;font-size:28.35px;line-height:28.35px;color:#555;font-weight:700;white-space:nowrap;right:1603.0px;text-align:right;transform:scaleX(0.9750);transform-origin:right center;">1,476,000.00</div>
<div style="position:absolute;left:2279px;top:2182.5px;width:1090px;height:70.5px;background:#f2f2f2;border:2px solid #c8c8c8;border-radius:7px;box-sizing:border-box;box-shadow:0 2px 2px rgba(0,0,0,0.09);overflow:hidden;"></div>
<div style="position:absolute;top:2205.6px;font-size:26px;line-height:26px;color:#777;font-weight:400;white-space:nowrap;left:2300.5px;">$</div>
<div style="position:absolute;top:2204.0px;font-size:28.35px;line-height:28.35px;color:#555;font-weight:700;white-space:nowrap;right:493.0px;text-align:right;">369,000.00</div>
<div style="position:absolute;left:489px;top:2276px;width:122px;height:64px;background:#ffffff;border:2px solid #c8c8c8;border-radius:6px;box-sizing:border-box;"></div>
<div style="position:absolute;top:2295.0px;font-size:28.63px;line-height:28.63px;color:#2a2d33;font-weight:400;white-space:nowrap;left:50.0px;width:1000px;text-align:center;transform:scaleX(0.8885);transform-origin:center center;">FY25</div>
<svg style="position:absolute;left:547px;top:2340px" width="3" height="62"><line x1="1.5" y1="0" x2="1.5" y2="62" stroke="#c8c8c8" stroke-width="2" stroke-dasharray="5.5 4"/></svg>
<svg style="position:absolute;left:539px;top:2376px" width="20" height="20"><circle cx="10" cy="10" r="6.9" fill="#fdfdfd" stroke="#c8c8c8" stroke-width="4"/></svg>
<div style="position:absolute;top:2372.7px;font-size:29px;line-height:29px;color:#2a2d33;font-weight:400;white-space:nowrap;right:2692.0px;text-align:right;">Jul</div>
<div style="position:absolute;left:1169px;top:2350.5px;width:1090px;height:70.5px;background:#f2f2f2;border:2px solid #c8c8c8;border-radius:7px;box-sizing:border-box;box-shadow:0 2px 2px rgba(0,0,0,0.09);overflow:hidden;"></div>
<div style="position:absolute;left:1171px;top:2352.5px;width:55px;height:66.5px;background:#f2f2f2;border-radius:5px 0 0 5px;"></div>
<div style="position:absolute;left:1226px;top:2352.5px;width:2px;height:66.5px;background:#c8c8c8;"></div>
<div style="position:absolute;top:2373.6px;font-size:26px;line-height:26px;color:#777;font-weight:400;white-space:nowrap;left:1190.5px;">$</div>
<div style="position:absolute;top:2372.2px;font-size:27.6px;line-height:27.6px;color:#555;font-weight:400;white-space:nowrap;right:1603.0px;text-align:right;">126,000.00</div>
<div style="position:absolute;left:2279px;top:2350.5px;width:1090px;height:70.5px;background:#ffffff;border:2px solid #c8c8c8;border-radius:7px;box-sizing:border-box;box-shadow:0 2px 2px rgba(0,0,0,0.09);overflow:hidden;"></div>
<div style="position:absolute;left:2281px;top:2352.5px;width:55px;height:66.5px;background:#fafafa;border-radius:5px 0 0 5px;"></div>
<div style="position:absolute;left:2336px;top:2352.5px;width:2px;height:66.5px;background:#c8c8c8;"></div>
<div style="position:absolute;top:2373.6px;font-size:26px;line-height:26px;color:#777;font-weight:400;white-space:nowrap;left:2300.5px;">$</div>
<script>(function(){var w=window.innerWidth;if(w&&Math.abs(w-3840)>2){document.documentElement.style.zoom=(w/3840);}})();</script>
</body></html>
